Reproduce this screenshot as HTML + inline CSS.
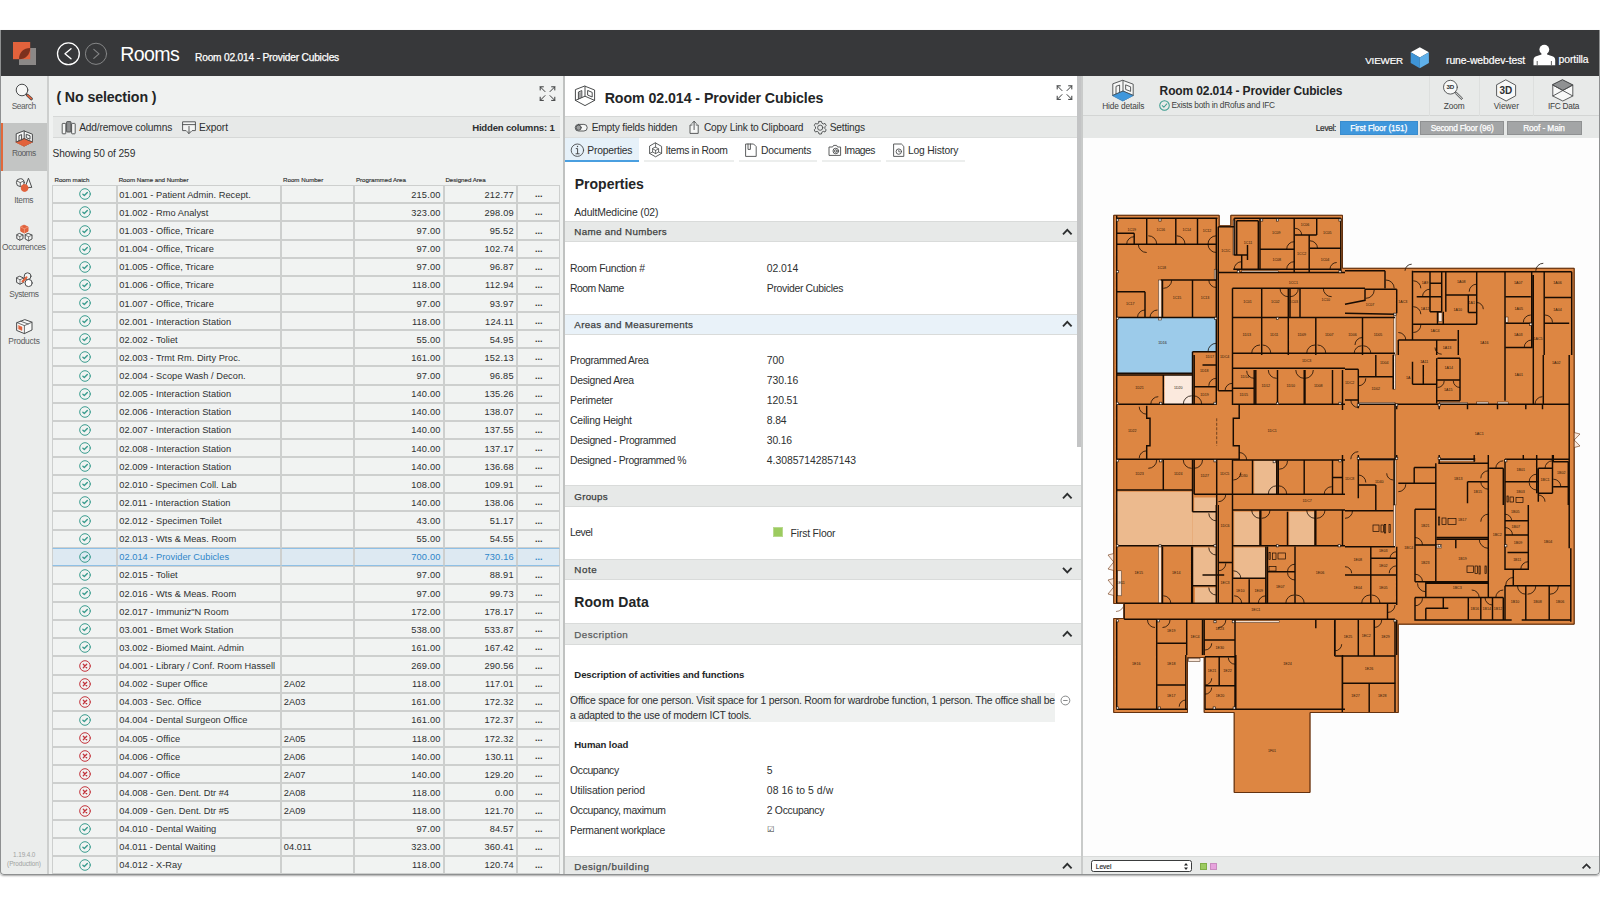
<!DOCTYPE html>
<html lang="en">
<head>
<meta charset="utf-8">
<title>Rooms - Room 02.014 - Provider Cubicles</title>
<style>
*{box-sizing:border-box;margin:0;padding:0}
html,body{width:1600px;height:900px;overflow:hidden;background:#fff}
body{font-family:"Liberation Sans",sans-serif;color:#2d2f30;position:relative;font-size:10px}
.abs{position:absolute}
#app{position:absolute;left:0;top:30px;width:1600px;height:845px;background:#f0f2f1;overflow:hidden;border-radius:0 0 4px 4px;box-shadow:0 1px 2px rgba(0,0,0,.35)}
#hdr{position:absolute;left:0;top:0;width:1600px;height:46px;background:#37383a}
#hdr .t{position:absolute;color:#fff;white-space:nowrap}
#side{position:absolute;left:0;top:46px;width:49px;height:799px;background:#ebedec;border-left:1px solid #b9bbba;border-right:2px solid #cdcfce}
#side .it{position:absolute;left:0;width:46px;text-align:center;font-size:8.6px;color:#5b5d5e;letter-spacing:-.2px}
#side .act{position:absolute;left:0;top:47px;width:46px;height:48px;background:#c3c5c4;border-left:2px solid #e2693b}
#lp{position:absolute;left:49px;top:46px;width:514px;height:799px;background:#f0f2f1}
#div1{position:absolute;left:563px;top:46px;width:2px;height:799px;background:#c0c2c1}
#mp{position:absolute;left:565px;top:46px;width:517px;height:799px;background:#fff;overflow:hidden}
#div2{position:absolute;left:1081px;top:46px;width:1.5px;height:799px;background:#c9cbca}
#rp{position:absolute;left:1082.5px;top:46px;width:517.5px;height:799px;background:#fdfdfd;overflow:hidden}
.t{white-space:nowrap}
#tb{position:absolute;border-collapse:separate;border-spacing:0;table-layout:fixed;width:508px;font-size:9.25px;color:#2d2f30;border:0}
#tb td{height:18.13px;border:1px solid #cdcfce;padding:1.2px 0 0 1.6px;white-space:nowrap;overflow:hidden;line-height:14px;vertical-align:middle;background:#f1f3f2}
#tb td.r{text-align:right;padding:1.2px 2.2px 0 0;letter-spacing:.18px}
#tb td.c{text-align:center;padding:0}
#tb td.c svg{display:block;margin:0 auto;position:relative;top:0px;left:.2px}
#tb td.d{font-weight:700;letter-spacing:0;font-size:9px}
#tb tr.sel td{background:#dde9f2;color:#2f86c9;border-top-color:#8fc0e6;border-bottom-color:#8fc0e6}

</style>
</head>
<body>
<div id="app">
<div id="hdr">
<svg class="abs" style="left:10px;top:9px" width="30" height="30" viewBox="10 9 30 30">
<rect x="19" y="18" width="17" height="17" fill="#8b8887"/>
<rect x="13" y="12" width="17.2" height="17.2" fill="#e2623c"/>
<path d="M19 29.2 C19 22.5 23.5 18 30.2 18 C30.2 24.7 25.7 29.2 19 29.2Z" fill="#7c301d"/>
</svg>
<svg class="abs" style="left:54px;top:9px" width="58" height="30" viewBox="54 9 58 30" fill="none" stroke-linecap="round" stroke-linejoin="round">
<circle cx="68.4" cy="23.8" r="10.9" stroke="#fff" stroke-width="1.3"/>
<path d="M71 18.8 L65 23.8 L71 28.8" stroke="#fff" stroke-width="1.4"/>
<circle cx="96" cy="23.8" r="10.6" stroke="#858687" stroke-width="1"/>
<path d="M93.8 19.3 L99 23.8 L93.8 28.3" stroke="#858687" stroke-width="1.1"/>
</svg>
<span class="abs t" style="left:120.3px;top:15px;font-size:19.6px;line-height:1;color:#fff;letter-spacing:-0.657px;">Rooms</span>
<span class="abs t" style="left:195.0px;top:23px;font-size:10.2px;line-height:1;color:#fff;letter-spacing:-0.195px;-webkit-text-stroke:.25px #fff;">Room 02.014 - Provider Cubicles</span>
<span class="abs t" style="left:1365.2px;top:26px;font-size:9.8px;line-height:1;color:#fff;letter-spacing:-0.143px;-webkit-text-stroke:.2px #fff;">VIEWER</span>
<svg class="abs" style="left:1410px;top:16px" width="20" height="23" viewBox="1410 16 20 23">
<path d="M1419.8 17.3 L1428.9 22.3 L1419.8 27.5 L1410.7 22.3Z" fill="#fff"/>
<path d="M1410.7 22.3 L1419.8 27.5 L1419.8 38.2 L1410.7 33Z" fill="#3e94d6"/>
<path d="M1428.9 22.3 L1419.8 27.5 L1419.8 38.2 L1428.9 33Z" fill="#5fb0ea"/>
</svg>
<span class="abs t" style="left:1446.0px;top:26px;font-size:10.4px;line-height:1;color:#fff;letter-spacing:-0.072px;-webkit-text-stroke:.2px #fff;">rune-webdev-test</span>
<svg class="abs" style="left:1532px;top:13px" width="25" height="24" viewBox="1532 13 25 24">
<circle cx="1544.3" cy="19.6" r="4.9" fill="#fff"/>
<path d="M1533.5 35.2 L1533.5 30 C1533.5 27.5 1535 26.6 1537 26 L1541.5 24.6 L1541.5 23 L1547.1 23 L1547.1 24.6 L1551.6 26 C1553.6 26.6 1555.2 27.5 1555.2 30 L1555.2 35.2Z" fill="#fff"/>
<path d="M1537.2 31 L1537.2 35.2 M1551.4 31 L1551.4 35.2" stroke="#37383a" stroke-width=".8"/>
</svg>
<span class="abs t" style="left:1558.5px;top:25px;font-size:10.4px;line-height:1;color:#fff;letter-spacing:-0.067px;-webkit-text-stroke:.2px #fff;">portilla</span>
</div>
<div id="side">
<div class="act"></div>
<span class="abs t" style="left:10.7px;top:26px;font-size:8.4px;line-height:1;color:#5a5c5d;letter-spacing:-0.419px;">Search</span>
<span class="abs t" style="left:11.0px;top:73px;font-size:8.4px;line-height:1;color:#5a5c5d;letter-spacing:-0.582px;">Rooms</span>
<span class="abs t" style="left:13.2px;top:120px;font-size:8.4px;line-height:1;color:#5a5c5d;letter-spacing:-0.287px;">Items</span>
<span class="abs t" style="left:1.0px;top:167px;font-size:8.4px;line-height:1;color:#5a5c5d;letter-spacing:-0.347px;">Occurrences</span>
<span class="abs t" style="left:8.2px;top:214px;font-size:8.4px;line-height:1;color:#5a5c5d;letter-spacing:-0.387px;">Systems</span>
<span class="abs t" style="left:7.3px;top:261px;font-size:8.4px;line-height:1;color:#5a5c5d;letter-spacing:-0.219px;">Products</span>
<span class="abs t" style="left:12.1px;top:776px;font-size:6.4px;line-height:1;color:#a0a2a1;letter-spacing:-0.116px;">1.19.4.0</span>
<span class="abs t" style="left:6.1px;top:785px;font-size:6.4px;line-height:1;color:#a0a2a1;letter-spacing:-0.088px;">(Production)</span>
<svg class="abs" style="left:-1px;top:0" width="48" height="300" viewBox="0 76 48 300" fill="none" stroke="#4a4c4d" stroke-width="1" stroke-linejoin="round" stroke-linecap="round">
<!-- search -->
<circle cx="22" cy="90" r="5.8" fill="#f6f7f6"/>
<path d="M26.2 94.2 L27.6 95.4" />
<path d="M27.2 95 L31.4 98.8" stroke="#4a4c4d" stroke-width="3"/>
<path d="M27.6 95.4 L31.2 98.6" stroke="#e2623c" stroke-width="1.6"/>
<!-- rooms -->
<path d="M24.2 131 L32.4 134.2 L32.4 142 L24.2 146 L16.2 142 L16.2 134.2Z" fill="#f4f5f4"/>
<path d="M16.2 142 L24.2 138.6 L32.4 142 L24.2 146Z" fill="#e2623c" stroke="#e2623c"/>
<path d="M24.2 131 L24.2 138.6 M16.2 142 L24.2 138.6 L32.4 142"/>
<path d="M19 141 L19 135.6 L21.6 134.6 L21.6 139.8 M26.6 134.4 L30 135.8 L30 139.2 L26.6 137.8Z"/>
<!-- items -->
<circle cx="20.3" cy="182.6" r="3.9" fill="#f4f5f4"/>
<path d="M20.3 182.6 L20.3 186 M17 181 L20.3 182.6 L23.6 181" stroke-width=".8"/>
<path d="M28.6 178.6 L31.8 187.4 L25.4 187.4Z" fill="#f4f5f4"/>
<circle cx="24.6" cy="188" r="3.4" fill="#e2623c" stroke="#e2623c"/>
<!-- occurrences -->
<path d="M24.4 225.3 L28 227 L28 231.2 L24.4 233 L20.8 231.2 L20.8 227Z" fill="#e2623c" stroke="#e2623c"/>
<path d="M20.8 227 L24.4 228.8 L28 227 M24.4 228.8 L24.4 233" stroke="#f4a98c" stroke-width=".7"/>
<path d="M19.8 233.6 L23 235 L23 238.6 L19.8 240.2 L16.8 238.6 L16.8 235Z" fill="#f4f5f4"/>
<path d="M16.8 235 L19.8 236.6 L23 235 M19.8 236.6 L19.8 240.2" stroke-width=".7"/>
<path d="M28.6 233.6 L32 235 L32 239 L28.6 240.8 L25.2 239 L25.2 235Z" fill="#f4f5f4"/>
<path d="M25.2 235 L28.6 236.8 L32 235 M28.6 236.8 L28.6 240.8" stroke-width=".7"/>
<!-- systems -->
<circle cx="27.6" cy="276.2" r="3.4" fill="#f4f5f4"/>
<path d="M20 276.4 L23.6 278 L23.6 282.4 L20 284.2 L16.6 282.4 L16.6 278Z" fill="#f4f5f4"/>
<path d="M16.6 278 L20 279.8 L23.6 278 M20 279.8 L20 284.2" stroke-width=".7"/>
<circle cx="28.6" cy="283" r="3.6" fill="#fff"/>
<path d="M22.6 281.4 L26.4 277.4" stroke="#e2623c" stroke-width="2.2"/>
<!-- products -->
<path d="M17 322.6 L24.8 319.6 L32 322.2 L32 330 L24.4 333.6 L17 330.6Z" fill="#f8f9f8"/>
<path d="M17 322.6 L24.4 325.6 L32 322.2 M24.4 325.6 L24.4 333.6 M20.6 321.2 L28.2 324" stroke-width=".8"/>
<path d="M18.6 325.6 L22 327 L22 330.4 L18.6 329Z" fill="#e2623c" stroke="#e2623c" stroke-width=".5"/>
</svg>
</div>
<div id="lp">
<span class="abs t" style="left:7.4px;top:14px;font-size:14.2px;line-height:1;font-weight:700;color:#232526;letter-spacing:-0.105px;">( No selection )</span>
<svg class="abs" style="left:489px;top:8px" width="20" height="20" viewBox="538 84 20 20" fill="none" stroke="#3a3c3d" stroke-width="1" stroke-linecap="round" stroke-linejoin="round">
<path d="M545 91.6 L540.2 86.8 M540.2 90 L540.2 86.8 L543.4 86.8 M550 91.6 L554.8 86.8 M551.6 86.8 L554.8 86.8 L554.8 90 M545 95.6 L540.2 100.4 M540.2 97.2 L540.2 100.4 L543.4 100.4 M550 95.6 L554.8 100.4 M551.6 100.4 L554.8 100.4 L554.8 97.2"/>
</svg>
<div class="abs" style="left:3.5px;top:40px;width:507.79999999999995px;height:22.4px;background:#e7e9e8;border-top:1px solid #d6d8d7;border-bottom:1px solid #d6d8d7"></div>
<svg class="abs" style="left:11px;top:43px" width="18" height="18" viewBox="60 119 18 18" fill="#f4f5f4" stroke="#4a4c4d" stroke-width=".9" stroke-linejoin="round">
<rect x="62.2" y="123.4" width="3.6" height="10.4" rx=".6"/>
<rect x="71.6" y="123.4" width="3.6" height="10.4" rx=".6"/>
<rect x="66.6" y="121.6" width="4.4" height="10.4" rx=".6" fill="#8d8f90"/>
</svg>
<span class="abs t" style="left:30.2px;top:47px;font-size:10.2px;line-height:1;color:#2d2f30;letter-spacing:-0.151px;">Add/remove columns</span>
<svg class="abs" style="left:131px;top:43px" width="18" height="18" viewBox="180 119 18 18" fill="none" stroke="#4a4c4d" stroke-width=".9" stroke-linejoin="round" stroke-linecap="round">
<path d="M185.6 130.6 L182.6 130.6 L182.6 121.8 L195.4 121.8 L195.4 130.6 L192.4 130.6" fill="#f4f5f4"/>
<path d="M182.6 124.6 L195.4 124.6"/>
<path d="M189 126.4 L189 133.4 M186.6 131.2 L189 133.6 L191.4 131.2"/>
</svg>
<span class="abs t" style="left:150.1px;top:47px;font-size:10.2px;line-height:1;color:#2d2f30;letter-spacing:-0.113px;">Export</span>
<span class="abs t" style="left:423.2px;top:47px;font-size:9.6px;line-height:1;font-weight:700;color:#2d2f30;letter-spacing:-0.204px;">Hidden columns: 1</span>
<span class="abs t" style="left:3.5px;top:73px;font-size:10.2px;line-height:1;color:#2d2f30;letter-spacing:-0.100px;">Showing 50 of 259</span>
<span class="abs t" style="left:5.5px;top:101px;font-size:6.2px;line-height:1;color:#2d2f30;letter-spacing:-0.025px;-webkit-text-stroke:.15px #333;">Room match</span>
<span class="abs t" style="left:69.7px;top:101px;font-size:6.2px;line-height:1;color:#2d2f30;letter-spacing:-0.037px;-webkit-text-stroke:.15px #333;">Room Name and Number</span>
<span class="abs t" style="left:234.0px;top:101px;font-size:6.2px;line-height:1;color:#2d2f30;letter-spacing:0.008px;-webkit-text-stroke:.15px #333;">Room Number</span>
<span class="abs t" style="left:306.9px;top:101px;font-size:6.2px;line-height:1;color:#2d2f30;letter-spacing:-0.008px;-webkit-text-stroke:.15px #333;">Programmed Area</span>
<span class="abs t" style="left:396.4px;top:101px;font-size:6.2px;line-height:1;color:#2d2f30;letter-spacing:-0.021px;-webkit-text-stroke:.15px #333;">Designed Area</span>
<table id="tb" style="left:3.3px;top:109.2px;letter-spacing:0.029px">
<colgroup><col style="width:64.4px"><col style="width:164.5px"><col style="width:73px"><col style="width:89.6px"><col style="width:73.2px"><col style="width:43.3px"></colgroup>
<tr><td class="c"><svg width="12" height="12" viewBox="0 0 12 12" fill="none" stroke="#3a9c8e" stroke-width="1" stroke-linecap="round" stroke-linejoin="round"><circle cx="6" cy="6" r="5.3"/><path d="M3.9 6.2 L5.3 7.5 L8.3 4.6" stroke-width="1.4"/></svg></td><td>01.001 - Patient Admin. Recept.</td><td></td><td class="r">215.00</td><td class="r">212.77</td><td class="c d">...</td></tr>
<tr><td class="c"><svg width="12" height="12" viewBox="0 0 12 12" fill="none" stroke="#3a9c8e" stroke-width="1" stroke-linecap="round" stroke-linejoin="round"><circle cx="6" cy="6" r="5.3"/><path d="M3.9 6.2 L5.3 7.5 L8.3 4.6" stroke-width="1.4"/></svg></td><td>01.002 - Rmo Analyst</td><td></td><td class="r">323.00</td><td class="r">298.09</td><td class="c d">...</td></tr>
<tr><td class="c"><svg width="12" height="12" viewBox="0 0 12 12" fill="none" stroke="#3a9c8e" stroke-width="1" stroke-linecap="round" stroke-linejoin="round"><circle cx="6" cy="6" r="5.3"/><path d="M3.9 6.2 L5.3 7.5 L8.3 4.6" stroke-width="1.4"/></svg></td><td>01.003 - Office, Tricare</td><td></td><td class="r">97.00</td><td class="r">95.52</td><td class="c d">...</td></tr>
<tr><td class="c"><svg width="12" height="12" viewBox="0 0 12 12" fill="none" stroke="#3a9c8e" stroke-width="1" stroke-linecap="round" stroke-linejoin="round"><circle cx="6" cy="6" r="5.3"/><path d="M3.9 6.2 L5.3 7.5 L8.3 4.6" stroke-width="1.4"/></svg></td><td>01.004 - Office, Tricare</td><td></td><td class="r">97.00</td><td class="r">102.74</td><td class="c d">...</td></tr>
<tr><td class="c"><svg width="12" height="12" viewBox="0 0 12 12" fill="none" stroke="#3a9c8e" stroke-width="1" stroke-linecap="round" stroke-linejoin="round"><circle cx="6" cy="6" r="5.3"/><path d="M3.9 6.2 L5.3 7.5 L8.3 4.6" stroke-width="1.4"/></svg></td><td>01.005 - Office, Tricare</td><td></td><td class="r">97.00</td><td class="r">96.87</td><td class="c d">...</td></tr>
<tr><td class="c"><svg width="12" height="12" viewBox="0 0 12 12" fill="none" stroke="#3a9c8e" stroke-width="1" stroke-linecap="round" stroke-linejoin="round"><circle cx="6" cy="6" r="5.3"/><path d="M3.9 6.2 L5.3 7.5 L8.3 4.6" stroke-width="1.4"/></svg></td><td>01.006 - Office, Tricare</td><td></td><td class="r">118.00</td><td class="r">112.94</td><td class="c d">...</td></tr>
<tr><td class="c"><svg width="12" height="12" viewBox="0 0 12 12" fill="none" stroke="#3a9c8e" stroke-width="1" stroke-linecap="round" stroke-linejoin="round"><circle cx="6" cy="6" r="5.3"/><path d="M3.9 6.2 L5.3 7.5 L8.3 4.6" stroke-width="1.4"/></svg></td><td>01.007 - Office, Tricare</td><td></td><td class="r">97.00</td><td class="r">93.97</td><td class="c d">...</td></tr>
<tr><td class="c"><svg width="12" height="12" viewBox="0 0 12 12" fill="none" stroke="#3a9c8e" stroke-width="1" stroke-linecap="round" stroke-linejoin="round"><circle cx="6" cy="6" r="5.3"/><path d="M3.9 6.2 L5.3 7.5 L8.3 4.6" stroke-width="1.4"/></svg></td><td>02.001 - Interaction Station</td><td></td><td class="r">118.00</td><td class="r">124.11</td><td class="c d">...</td></tr>
<tr><td class="c"><svg width="12" height="12" viewBox="0 0 12 12" fill="none" stroke="#3a9c8e" stroke-width="1" stroke-linecap="round" stroke-linejoin="round"><circle cx="6" cy="6" r="5.3"/><path d="M3.9 6.2 L5.3 7.5 L8.3 4.6" stroke-width="1.4"/></svg></td><td>02.002 - Toliet</td><td></td><td class="r">55.00</td><td class="r">54.95</td><td class="c d">...</td></tr>
<tr><td class="c"><svg width="12" height="12" viewBox="0 0 12 12" fill="none" stroke="#3a9c8e" stroke-width="1" stroke-linecap="round" stroke-linejoin="round"><circle cx="6" cy="6" r="5.3"/><path d="M3.9 6.2 L5.3 7.5 L8.3 4.6" stroke-width="1.4"/></svg></td><td>02.003 - Trmt Rm. Dirty Proc.</td><td></td><td class="r">161.00</td><td class="r">152.13</td><td class="c d">...</td></tr>
<tr><td class="c"><svg width="12" height="12" viewBox="0 0 12 12" fill="none" stroke="#3a9c8e" stroke-width="1" stroke-linecap="round" stroke-linejoin="round"><circle cx="6" cy="6" r="5.3"/><path d="M3.9 6.2 L5.3 7.5 L8.3 4.6" stroke-width="1.4"/></svg></td><td>02.004 - Scope Wash / Decon.</td><td></td><td class="r">97.00</td><td class="r">96.85</td><td class="c d">...</td></tr>
<tr><td class="c"><svg width="12" height="12" viewBox="0 0 12 12" fill="none" stroke="#3a9c8e" stroke-width="1" stroke-linecap="round" stroke-linejoin="round"><circle cx="6" cy="6" r="5.3"/><path d="M3.9 6.2 L5.3 7.5 L8.3 4.6" stroke-width="1.4"/></svg></td><td>02.005 - Interaction Station</td><td></td><td class="r">140.00</td><td class="r">135.26</td><td class="c d">...</td></tr>
<tr><td class="c"><svg width="12" height="12" viewBox="0 0 12 12" fill="none" stroke="#3a9c8e" stroke-width="1" stroke-linecap="round" stroke-linejoin="round"><circle cx="6" cy="6" r="5.3"/><path d="M3.9 6.2 L5.3 7.5 L8.3 4.6" stroke-width="1.4"/></svg></td><td>02.006 - Interaction Station</td><td></td><td class="r">140.00</td><td class="r">138.07</td><td class="c d">...</td></tr>
<tr><td class="c"><svg width="12" height="12" viewBox="0 0 12 12" fill="none" stroke="#3a9c8e" stroke-width="1" stroke-linecap="round" stroke-linejoin="round"><circle cx="6" cy="6" r="5.3"/><path d="M3.9 6.2 L5.3 7.5 L8.3 4.6" stroke-width="1.4"/></svg></td><td>02.007 - Interaction Station</td><td></td><td class="r">140.00</td><td class="r">137.55</td><td class="c d">...</td></tr>
<tr><td class="c"><svg width="12" height="12" viewBox="0 0 12 12" fill="none" stroke="#3a9c8e" stroke-width="1" stroke-linecap="round" stroke-linejoin="round"><circle cx="6" cy="6" r="5.3"/><path d="M3.9 6.2 L5.3 7.5 L8.3 4.6" stroke-width="1.4"/></svg></td><td>02.008 - Interaction Station</td><td></td><td class="r">140.00</td><td class="r">137.17</td><td class="c d">...</td></tr>
<tr><td class="c"><svg width="12" height="12" viewBox="0 0 12 12" fill="none" stroke="#3a9c8e" stroke-width="1" stroke-linecap="round" stroke-linejoin="round"><circle cx="6" cy="6" r="5.3"/><path d="M3.9 6.2 L5.3 7.5 L8.3 4.6" stroke-width="1.4"/></svg></td><td>02.009 - Interaction Station</td><td></td><td class="r">140.00</td><td class="r">136.68</td><td class="c d">...</td></tr>
<tr><td class="c"><svg width="12" height="12" viewBox="0 0 12 12" fill="none" stroke="#3a9c8e" stroke-width="1" stroke-linecap="round" stroke-linejoin="round"><circle cx="6" cy="6" r="5.3"/><path d="M3.9 6.2 L5.3 7.5 L8.3 4.6" stroke-width="1.4"/></svg></td><td>02.010 - Specimen Coll. Lab</td><td></td><td class="r">108.00</td><td class="r">109.91</td><td class="c d">...</td></tr>
<tr><td class="c"><svg width="12" height="12" viewBox="0 0 12 12" fill="none" stroke="#3a9c8e" stroke-width="1" stroke-linecap="round" stroke-linejoin="round"><circle cx="6" cy="6" r="5.3"/><path d="M3.9 6.2 L5.3 7.5 L8.3 4.6" stroke-width="1.4"/></svg></td><td>02.011 - Interaction Station</td><td></td><td class="r">140.00</td><td class="r">138.06</td><td class="c d">...</td></tr>
<tr><td class="c"><svg width="12" height="12" viewBox="0 0 12 12" fill="none" stroke="#3a9c8e" stroke-width="1" stroke-linecap="round" stroke-linejoin="round"><circle cx="6" cy="6" r="5.3"/><path d="M3.9 6.2 L5.3 7.5 L8.3 4.6" stroke-width="1.4"/></svg></td><td>02.012 - Specimen Toilet</td><td></td><td class="r">43.00</td><td class="r">51.17</td><td class="c d">...</td></tr>
<tr><td class="c"><svg width="12" height="12" viewBox="0 0 12 12" fill="none" stroke="#3a9c8e" stroke-width="1" stroke-linecap="round" stroke-linejoin="round"><circle cx="6" cy="6" r="5.3"/><path d="M3.9 6.2 L5.3 7.5 L8.3 4.6" stroke-width="1.4"/></svg></td><td>02.013 - Wts &amp; Meas. Room</td><td></td><td class="r">55.00</td><td class="r">54.55</td><td class="c d">...</td></tr>
<tr class="sel"><td class="c"><svg width="12" height="12" viewBox="0 0 12 12" fill="none" stroke="#3a9c8e" stroke-width="1" stroke-linecap="round" stroke-linejoin="round"><circle cx="6" cy="6" r="5.3"/><path d="M3.9 6.2 L5.3 7.5 L8.3 4.6" stroke-width="1.4"/></svg></td><td>02.014 - Provider Cubicles</td><td></td><td class="r">700.00</td><td class="r">730.16</td><td class="c d">...</td></tr>
<tr><td class="c"><svg width="12" height="12" viewBox="0 0 12 12" fill="none" stroke="#3a9c8e" stroke-width="1" stroke-linecap="round" stroke-linejoin="round"><circle cx="6" cy="6" r="5.3"/><path d="M3.9 6.2 L5.3 7.5 L8.3 4.6" stroke-width="1.4"/></svg></td><td>02.015 - Toliet</td><td></td><td class="r">97.00</td><td class="r">88.91</td><td class="c d">...</td></tr>
<tr><td class="c"><svg width="12" height="12" viewBox="0 0 12 12" fill="none" stroke="#3a9c8e" stroke-width="1" stroke-linecap="round" stroke-linejoin="round"><circle cx="6" cy="6" r="5.3"/><path d="M3.9 6.2 L5.3 7.5 L8.3 4.6" stroke-width="1.4"/></svg></td><td>02.016 - Wts &amp; Meas. Room</td><td></td><td class="r">97.00</td><td class="r">99.73</td><td class="c d">...</td></tr>
<tr><td class="c"><svg width="12" height="12" viewBox="0 0 12 12" fill="none" stroke="#3a9c8e" stroke-width="1" stroke-linecap="round" stroke-linejoin="round"><circle cx="6" cy="6" r="5.3"/><path d="M3.9 6.2 L5.3 7.5 L8.3 4.6" stroke-width="1.4"/></svg></td><td>02.017 - Immuniz&quot;N Room</td><td></td><td class="r">172.00</td><td class="r">178.17</td><td class="c d">...</td></tr>
<tr><td class="c"><svg width="12" height="12" viewBox="0 0 12 12" fill="none" stroke="#3a9c8e" stroke-width="1" stroke-linecap="round" stroke-linejoin="round"><circle cx="6" cy="6" r="5.3"/><path d="M3.9 6.2 L5.3 7.5 L8.3 4.6" stroke-width="1.4"/></svg></td><td>03.001 - Bmet Work Station</td><td></td><td class="r">538.00</td><td class="r">533.87</td><td class="c d">...</td></tr>
<tr><td class="c"><svg width="12" height="12" viewBox="0 0 12 12" fill="none" stroke="#3a9c8e" stroke-width="1" stroke-linecap="round" stroke-linejoin="round"><circle cx="6" cy="6" r="5.3"/><path d="M3.9 6.2 L5.3 7.5 L8.3 4.6" stroke-width="1.4"/></svg></td><td>03.002 - Biomed Maint. Admin</td><td></td><td class="r">161.00</td><td class="r">167.42</td><td class="c d">...</td></tr>
<tr><td class="c"><svg width="12" height="12" viewBox="0 0 12 12" fill="none" stroke="#c2343c" stroke-width="1" stroke-linecap="round" stroke-linejoin="round"><circle cx="6" cy="6" r="5.3"/><path d="M4.3 4.3 L7.7 7.7 M7.7 4.3 L4.3 7.7" stroke-width="1.3"/></svg></td><td>04.001 - Library / Conf. Room Hassell</td><td></td><td class="r">269.00</td><td class="r">290.56</td><td class="c d">...</td></tr>
<tr><td class="c"><svg width="12" height="12" viewBox="0 0 12 12" fill="none" stroke="#c2343c" stroke-width="1" stroke-linecap="round" stroke-linejoin="round"><circle cx="6" cy="6" r="5.3"/><path d="M4.3 4.3 L7.7 7.7 M7.7 4.3 L4.3 7.7" stroke-width="1.3"/></svg></td><td>04.002 - Super Office</td><td>2A02</td><td class="r">118.00</td><td class="r">117.01</td><td class="c d">...</td></tr>
<tr><td class="c"><svg width="12" height="12" viewBox="0 0 12 12" fill="none" stroke="#c2343c" stroke-width="1" stroke-linecap="round" stroke-linejoin="round"><circle cx="6" cy="6" r="5.3"/><path d="M4.3 4.3 L7.7 7.7 M7.7 4.3 L4.3 7.7" stroke-width="1.3"/></svg></td><td>04.003 - Sec. Office</td><td>2A03</td><td class="r">161.00</td><td class="r">172.32</td><td class="c d">...</td></tr>
<tr><td class="c"><svg width="12" height="12" viewBox="0 0 12 12" fill="none" stroke="#3a9c8e" stroke-width="1" stroke-linecap="round" stroke-linejoin="round"><circle cx="6" cy="6" r="5.3"/><path d="M3.9 6.2 L5.3 7.5 L8.3 4.6" stroke-width="1.4"/></svg></td><td>04.004 - Dental Surgeon Office</td><td></td><td class="r">161.00</td><td class="r">172.37</td><td class="c d">...</td></tr>
<tr><td class="c"><svg width="12" height="12" viewBox="0 0 12 12" fill="none" stroke="#c2343c" stroke-width="1" stroke-linecap="round" stroke-linejoin="round"><circle cx="6" cy="6" r="5.3"/><path d="M4.3 4.3 L7.7 7.7 M7.7 4.3 L4.3 7.7" stroke-width="1.3"/></svg></td><td>04.005 - Office</td><td>2A05</td><td class="r">118.00</td><td class="r">172.32</td><td class="c d">...</td></tr>
<tr><td class="c"><svg width="12" height="12" viewBox="0 0 12 12" fill="none" stroke="#c2343c" stroke-width="1" stroke-linecap="round" stroke-linejoin="round"><circle cx="6" cy="6" r="5.3"/><path d="M4.3 4.3 L7.7 7.7 M7.7 4.3 L4.3 7.7" stroke-width="1.3"/></svg></td><td>04.006 - Office</td><td>2A06</td><td class="r">140.00</td><td class="r">130.11</td><td class="c d">...</td></tr>
<tr><td class="c"><svg width="12" height="12" viewBox="0 0 12 12" fill="none" stroke="#c2343c" stroke-width="1" stroke-linecap="round" stroke-linejoin="round"><circle cx="6" cy="6" r="5.3"/><path d="M4.3 4.3 L7.7 7.7 M7.7 4.3 L4.3 7.7" stroke-width="1.3"/></svg></td><td>04.007 - Office</td><td>2A07</td><td class="r">140.00</td><td class="r">129.20</td><td class="c d">...</td></tr>
<tr><td class="c"><svg width="12" height="12" viewBox="0 0 12 12" fill="none" stroke="#c2343c" stroke-width="1" stroke-linecap="round" stroke-linejoin="round"><circle cx="6" cy="6" r="5.3"/><path d="M4.3 4.3 L7.7 7.7 M7.7 4.3 L4.3 7.7" stroke-width="1.3"/></svg></td><td>04.008 - Gen. Dent. Dtr #4</td><td>2A08</td><td class="r">118.00</td><td class="r">0.00</td><td class="c d">...</td></tr>
<tr><td class="c"><svg width="12" height="12" viewBox="0 0 12 12" fill="none" stroke="#c2343c" stroke-width="1" stroke-linecap="round" stroke-linejoin="round"><circle cx="6" cy="6" r="5.3"/><path d="M4.3 4.3 L7.7 7.7 M7.7 4.3 L4.3 7.7" stroke-width="1.3"/></svg></td><td>04.009 - Gen. Dent. Dtr #5</td><td>2A09</td><td class="r">118.00</td><td class="r">121.70</td><td class="c d">...</td></tr>
<tr><td class="c"><svg width="12" height="12" viewBox="0 0 12 12" fill="none" stroke="#3a9c8e" stroke-width="1" stroke-linecap="round" stroke-linejoin="round"><circle cx="6" cy="6" r="5.3"/><path d="M3.9 6.2 L5.3 7.5 L8.3 4.6" stroke-width="1.4"/></svg></td><td>04.010 - Dental Waiting</td><td></td><td class="r">97.00</td><td class="r">84.57</td><td class="c d">...</td></tr>
<tr><td class="c"><svg width="12" height="12" viewBox="0 0 12 12" fill="none" stroke="#3a9c8e" stroke-width="1" stroke-linecap="round" stroke-linejoin="round"><circle cx="6" cy="6" r="5.3"/><path d="M3.9 6.2 L5.3 7.5 L8.3 4.6" stroke-width="1.4"/></svg></td><td>04.011 - Dental Waiting</td><td>04.011</td><td class="r">323.00</td><td class="r">360.41</td><td class="c d">...</td></tr>
<tr><td class="c"><svg width="12" height="12" viewBox="0 0 12 12" fill="none" stroke="#3a9c8e" stroke-width="1" stroke-linecap="round" stroke-linejoin="round"><circle cx="6" cy="6" r="5.3"/><path d="M3.9 6.2 L5.3 7.5 L8.3 4.6" stroke-width="1.4"/></svg></td><td>04.012 - X-Ray</td><td></td><td class="r">118.00</td><td class="r">120.74</td><td class="c d">...</td></tr>
</table>
</div>
<div id="div1"></div>
<div id="mp">
<svg class="abs" style="left:8px;top:8px" width="24" height="24" viewBox="573 84 24 24" fill="none" stroke="#4a4c4d" stroke-width="1" stroke-linejoin="round" stroke-linecap="round">
<path d="M585 86.2 L594.6 90 L594.6 100.4 L585 105.6 L575.4 100.4 L575.4 90Z"/>
<path d="M585 86.2 L585 96.2 M575.4 100.4 L585 96.2 L594.6 100.4"/>
<path d="M578.4 99 L578.4 92 L581.8 90.6 L581.8 97.6 M580 98.2 L580 92.6 M588 90.6 L592.2 92.4 L592.2 97 L588 95.2Z"/>
</svg>
<span class="abs t" style="left:39.7px;top:15px;font-size:14.2px;line-height:1;font-weight:700;color:#232526;letter-spacing:-0.067px;">Room 02.014 - Provider Cubicles</span>
<svg class="abs" style="left:490px;top:7px" width="20" height="20" viewBox="538 84 20 20" fill="none" stroke="#3a3c3d" stroke-width="1" stroke-linecap="round" stroke-linejoin="round">
<path d="M545 91.6 L540.2 86.8 M540.2 90 L540.2 86.8 L543.4 86.8 M550 91.6 L554.8 86.8 M551.6 86.8 L554.8 86.8 L554.8 90 M545 95.6 L540.2 100.4 M540.2 97.2 L540.2 100.4 L543.4 100.4 M550 95.6 L554.8 100.4 M551.6 100.4 L554.8 100.4 L554.8 97.2"/>
</svg>
<div class="abs" style="left:0;top:40px;width:516px;height:22.3px;background:#e7e9e8;border-top:1px solid #d6d8d7;border-bottom:1px solid #dcdedd"></div>
<svg class="abs" style="left:8px;top:44px" width="260" height="16" viewBox="573 120 260 16" fill="none" stroke="#4a4c4d" stroke-width=".9" stroke-linejoin="round" stroke-linecap="round">
<rect x="575.2" y="124.4" width="12" height="6.6" rx="3.3" fill="#f6f7f6"/>
<circle cx="578.6" cy="127.7" r="2.6" fill="#9b9d9e"/>
<path d="M692 125 L690 125 L690 133.4 L698.2 133.4 L698.2 125 L696.2 125" fill="#f6f7f6"/>
<path d="M694.1 129.6 L694.1 121.4 M692 123.4 L694.1 121.2 L696.2 123.4"/>
<circle cx="820.2" cy="127.7" r="2.6"/>
<path d="M819 121.4 L821.4 121.4 L821.9 123.2 L823.3 124 L825 123.4 L826.2 125.5 L824.9 126.8 L824.9 128.6 L826.2 129.9 L825 132 L823.3 131.4 L821.9 132.2 L821.4 134 L819 134 L818.5 132.2 L817.1 131.4 L815.4 132 L814.2 129.9 L815.5 128.6 L815.5 126.8 L814.2 125.5 L815.4 123.4 L817.1 124 L818.5 123.2Z"/>
</svg>
<span class="abs t" style="left:26.7px;top:47px;font-size:10.2px;line-height:1;color:#2d2f30;letter-spacing:-0.180px;">Empty fields hidden</span>
<span class="abs t" style="left:138.9px;top:47px;font-size:10.2px;line-height:1;color:#2d2f30;letter-spacing:-0.163px;">Copy Link to Clipboard</span>
<span class="abs t" style="left:264.8px;top:47px;font-size:10.2px;line-height:1;color:#2d2f30;letter-spacing:-0.232px;">Settings</span>
<div class="abs" style="left:0;top:62.4px;width:73.5px;height:23.6px;background:#e6f1f9;border-bottom:2px solid #4a9fe0"></div>
<div class="abs" style="left:78.5px;top:84.4px;width:90.3px;height:1.6px;background:#eceeed"></div>
<div class="abs" style="left:174.2px;top:84.4px;width:78.1px;height:1.6px;background:#eceeed"></div>
<div class="abs" style="left:257.0px;top:84.4px;width:59.3px;height:1.6px;background:#eceeed"></div>
<div class="abs" style="left:320.8px;top:84.4px;width:78.8px;height:1.6px;background:#eceeed"></div>
<svg class="abs" style="left:4px;top:65px" width="340" height="18" viewBox="569 141 340 18" fill="none" stroke="#4a4c4d" stroke-width=".9" stroke-linejoin="round" stroke-linecap="round">
<circle cx="577.4" cy="150.2" r="6.2"/>
<path d="M576.2 148.6 L577.6 148.6 L577.6 153.6 M576 153.8 L579.2 153.8" stroke-width="1"/>
<circle cx="577.5" cy="146.5" r=".7" fill="#4a4c4d" stroke="none"/>
<path d="M655.6 143 L661.6 146.4 L661.6 153.4 L655.6 156.8 L649.6 153.4 L649.6 146.4Z"/>
<path d="M655.6 147.2 L658.6 148.8 L658.6 152 L655.6 153.6 L652.6 152 L652.6 148.8Z M652.6 148.8 L655.6 150.4 L658.6 148.8 M655.6 150.4 L655.6 153.6 M655.6 143 L655.6 147.2 M649.6 153.4 L652.6 152 M661.6 153.4 L658.6 152" stroke-width=".8"/>
<path d="M746 144 L753.6 144 L756.2 146.6 L756.2 156.4 L746 156.4Z" fill="#fff"/>
<path d="M748 144 L748 149.4 L750.4 149.4 L750.4 144"/>
<path d="M829.4 147 L832.6 147 L833.6 145.4 L836.6 145.4 L837.6 147 L840.6 147 L840.6 155.4 L829.4 155.4Z" fill="#fff"/>
<circle cx="835.8" cy="151" r="2.8"/><circle cx="835.8" cy="151" r="1.3"/>
<path d="M894 144 L901.4 144 L903.8 146.4 L903.8 156.4 L894 156.4Z" fill="#fff"/>
<circle cx="898.8" cy="151.6" r="2.7"/><path d="M898.8 150.2 L898.8 151.8 L900 151.8" stroke-width=".8"/>
</svg>
<span class="abs t" style="left:22.3px;top:70px;font-size:10.3px;line-height:1;color:#2d2f30;letter-spacing:-0.205px;">Properties</span>
<span class="abs t" style="left:100.5px;top:70px;font-size:10.3px;line-height:1;color:#2d2f30;letter-spacing:-0.331px;">Items in Room</span>
<span class="abs t" style="left:196.1px;top:70px;font-size:10.3px;line-height:1;color:#2d2f30;letter-spacing:-0.233px;">Documents</span>
<span class="abs t" style="left:279.2px;top:70px;font-size:10.3px;line-height:1;color:#2d2f30;letter-spacing:-0.496px;">Images</span>
<span class="abs t" style="left:342.9px;top:70px;font-size:10.3px;line-height:1;color:#2d2f30;letter-spacing:-0.154px;">Log History</span>
<span class="abs t" style="left:9.8px;top:101px;font-size:14px;line-height:1;font-weight:700;color:#232526;letter-spacing:-0.015px;">Properties</span>
<span class="abs t" style="left:9.3px;top:132px;font-size:10.4px;line-height:1;color:#2d2f30;letter-spacing:-0.151px;">AdultMedicine (02)</span>
<div class="abs" style="left:0;top:145.0px;width:516px;height:21.0px;background:#e7e9e8;border-top:1px solid #d9dbda;border-bottom:1px solid #d9dbda"></div>
<span class="abs t" style="left:9.3px;top:151px;font-size:9.8px;line-height:1;color:#3d3f40;letter-spacing:0.313px;-webkit-text-stroke:.25px #3d3f40;">Name and Numbers</span>
<svg class="abs" style="left:495px;top:149.5px" width="14" height="12" viewBox="1060 225.5 14 12" fill="none" stroke="#2d2f30" stroke-width="1.9" stroke-linejoin="miter"><path d="M1063 233.8 L1067.3 229.4 L1071.6 233.8"/></svg>
<span class="abs t" style="left:5.1px;top:188px;font-size:10.4px;line-height:1;color:#2d2f30;letter-spacing:-0.306px;">Room Function #</span>
<span class="abs t" style="left:201.8px;top:188px;font-size:10.4px;line-height:1;color:#2d2f30;letter-spacing:-0.052px;">02.014</span>
<span class="abs t" style="left:5.1px;top:208px;font-size:10.4px;line-height:1;color:#2d2f30;letter-spacing:-0.531px;">Room Name</span>
<span class="abs t" style="left:201.8px;top:208px;font-size:10.4px;line-height:1;color:#2d2f30;letter-spacing:-0.306px;">Provider Cubicles</span>
<div class="abs" style="left:0;top:237.8px;width:516px;height:21.0px;background:#e9f2f9;border-top:1px solid #d9dbda;border-bottom:1px solid #d9dbda"></div>
<span class="abs t" style="left:9.3px;top:244px;font-size:9.8px;line-height:1;color:#3d3f40;letter-spacing:0.308px;-webkit-text-stroke:.25px #3d3f40;">Areas and Measurements</span>
<svg class="abs" style="left:495px;top:242.3px" width="14" height="12" viewBox="1060 318.3 14 12" fill="none" stroke="#2d2f30" stroke-width="1.9" stroke-linejoin="miter"><path d="M1063 326.6 L1067.3 322.2 L1071.6 326.6"/></svg>
<span class="abs t" style="left:5.1px;top:280px;font-size:10.4px;line-height:1;color:#2d2f30;letter-spacing:-0.400px;">Programmed Area</span>
<span class="abs t" style="left:201.8px;top:280px;font-size:10.4px;line-height:1;color:#2d2f30;letter-spacing:-0.051px;">700</span>
<span class="abs t" style="left:5.1px;top:300px;font-size:10.4px;line-height:1;color:#2d2f30;letter-spacing:-0.348px;">Designed Area</span>
<span class="abs t" style="left:201.8px;top:300px;font-size:10.4px;line-height:1;color:#2d2f30;letter-spacing:-0.052px;">730.16</span>
<span class="abs t" style="left:5.1px;top:320px;font-size:10.4px;line-height:1;color:#2d2f30;letter-spacing:-0.265px;">Perimeter</span>
<span class="abs t" style="left:201.8px;top:320px;font-size:10.4px;line-height:1;color:#2d2f30;letter-spacing:-0.102px;">120.51</span>
<span class="abs t" style="left:5.1px;top:340px;font-size:10.4px;line-height:1;color:#2d2f30;letter-spacing:-0.225px;">Ceiling Height</span>
<span class="abs t" style="left:201.8px;top:340px;font-size:10.4px;line-height:1;color:#2d2f30;letter-spacing:-0.160px;">8.84</span>
<span class="abs t" style="left:5.1px;top:360px;font-size:10.4px;line-height:1;color:#2d2f30;letter-spacing:-0.362px;">Designed - Programmed</span>
<span class="abs t" style="left:201.8px;top:360px;font-size:10.4px;line-height:1;color:#2d2f30;letter-spacing:-0.165px;">30.16</span>
<span class="abs t" style="left:5.1px;top:380px;font-size:10.4px;line-height:1;color:#2d2f30;letter-spacing:-0.401px;">Designed - Programmed %</span>
<span class="abs t" style="left:201.8px;top:380px;font-size:10.4px;line-height:1;color:#2d2f30;letter-spacing:-0.022px;">4.30857142857143</span>
<div class="abs" style="left:0;top:409.3px;width:516px;height:22.0px;background:#e7e9e8;border-top:1px solid #d9dbda;border-bottom:1px solid #d9dbda"></div>
<span class="abs t" style="left:9.3px;top:416px;font-size:9.8px;line-height:1;color:#3d3f40;letter-spacing:0.244px;-webkit-text-stroke:.25px #3d3f40;">Groups</span>
<svg class="abs" style="left:495px;top:414.3px" width="14" height="12" viewBox="1060 490.3 14 12" fill="none" stroke="#2d2f30" stroke-width="1.9" stroke-linejoin="miter"><path d="M1063 498.6 L1067.3 494.2 L1071.6 498.6"/></svg>
<span class="abs t" style="left:5.1px;top:452px;font-size:10.4px;line-height:1;color:#2d2f30;letter-spacing:-0.553px;">Level</span>
<div class="abs" style="left:208.1px;top:451.3px;width:9.8px;height:9.8px;background:#9ccb5f;border:1px solid #b9d98f"></div>
<span class="abs t" style="left:225.6px;top:453px;font-size:10.4px;line-height:1;color:#2d2f30;letter-spacing:-0.182px;">First Floor</span>
<div class="abs" style="left:0;top:482.8px;width:516px;height:21.3px;background:#e7e9e8;border-top:1px solid #d9dbda;border-bottom:1px solid #d9dbda"></div>
<span class="abs t" style="left:9.3px;top:489px;font-size:9.8px;line-height:1;color:#3d3f40;letter-spacing:0.600px;-webkit-text-stroke:.25px #3d3f40;">Note</span>
<svg class="abs" style="left:495px;top:487.5px" width="14" height="12" viewBox="1060 563.5 14 12" fill="none" stroke="#2d2f30" stroke-width="1.9" stroke-linejoin="miter"><path d="M1063 567.4 L1067.3 571.8 L1071.6 567.4"/></svg>
<span class="abs t" style="left:9.3px;top:519px;font-size:14px;line-height:1;font-weight:700;color:#232526;letter-spacing:0.078px;">Room Data</span>
<div class="abs" style="left:0;top:546.8px;width:516px;height:22.0px;background:#e7e9e8;border-top:1px solid #d9dbda;border-bottom:1px solid #d9dbda"></div>
<span class="abs t" style="left:9.3px;top:554px;font-size:9.8px;line-height:1;color:#5a5c5d;letter-spacing:0.444px;-webkit-text-stroke:.25px #5a5c5d;">Description</span>
<svg class="abs" style="left:495px;top:551.8px" width="14" height="12" viewBox="1060 627.8 14 12" fill="none" stroke="#2d2f30" stroke-width="1.9" stroke-linejoin="miter"><path d="M1063 636.1 L1067.3 631.7 L1071.6 636.1"/></svg>
<span class="abs t" style="left:9.3px;top:594px;font-size:9.6px;line-height:1;font-weight:700;color:#232526;letter-spacing:-0.097px;">Description of activities and functions</span>
<div class="abs" style="left:4.8px;top:616.8px;width:485.4px;height:29.7px;background:#eff1f0"></div>
<span class="abs t" style="left:5.1px;top:620px;font-size:10.4px;line-height:1;color:#2d2f30;letter-spacing:-0.240px;">Office space for one person. Visit space for 1 person. Room for wardrobe function, 1 person. The office shall be</span>
<span class="abs t" style="left:5.1px;top:635px;font-size:10.4px;line-height:1;color:#2d2f30;letter-spacing:-0.255px;">a adapted to the use of modern ICT tools.</span>
<svg class="abs" style="left:495px;top:619px" width="12" height="12" viewBox="1060 695 12 12" fill="none" stroke="#6a6c6d" stroke-width=".8"><circle cx="1065.4" cy="700.5" r="4.4"/><path d="M1063.2 700.5 L1067.6 700.5"/></svg>
<span class="abs t" style="left:9.3px;top:664px;font-size:9.6px;line-height:1;font-weight:700;color:#232526;letter-spacing:-0.104px;">Human load</span>
<span class="abs t" style="left:5.1px;top:690px;font-size:10.4px;line-height:1;color:#2d2f30;letter-spacing:-0.370px;">Occupancy</span>
<span class="abs t" style="left:201.8px;top:690px;font-size:10.4px;line-height:1;color:#2d2f30;">5</span>
<span class="abs t" style="left:5.1px;top:710px;font-size:10.4px;line-height:1;color:#2d2f30;letter-spacing:-0.110px;">Utilisation period</span>
<span class="abs t" style="left:201.8px;top:710px;font-size:10.4px;line-height:1;color:#2d2f30;letter-spacing:0.083px;">08 16 to 5 d/w</span>
<span class="abs t" style="left:5.1px;top:730px;font-size:10.4px;line-height:1;color:#2d2f30;letter-spacing:-0.361px;">Occupancy, maximum</span>
<span class="abs t" style="left:201.8px;top:730px;font-size:10.4px;line-height:1;color:#2d2f30;letter-spacing:-0.300px;">2 Occupancy</span>
<span class="abs t" style="left:5.1px;top:750px;font-size:10.4px;line-height:1;color:#2d2f30;letter-spacing:-0.299px;">Permanent workplace</span>
<span class="abs t" style="left:202.2px;top:750.2px;font-size:8px;line-height:1;font-family:'DejaVu Sans',sans-serif;color:#2d2f30">&#9745;</span>
<div class="abs" style="left:0;top:779.5px;width:516px;height:21.5px;background:#e7e9e8;border-top:1px solid #d9dbda;border-bottom:1px solid #d9dbda"></div>
<span class="abs t" style="left:9.3px;top:786px;font-size:9.8px;line-height:1;color:#4a4c4d;letter-spacing:0.552px;-webkit-text-stroke:.25px #4a4c4d;">Design/building</span>
<svg class="abs" style="left:495px;top:784.2px" width="14" height="12" viewBox="1060 860.2 14 12" fill="none" stroke="#2d2f30" stroke-width="1.9" stroke-linejoin="miter"><path d="M1063 868.5 L1067.3 864.1 L1071.6 868.5"/></svg>
<div class="abs" style="left:512.2px;top:0;width:4.6px;height:370.7px;background:#c3c4c5"></div>
</div>
<div id="div2"></div>
<div id="rp">
<div class="abs" style="left:0;top:0;width:518px;height:40.2px;background:#e8eae9;border-bottom:1px solid #d3d5d4"></div>
<div class="abs" style="left:0;top:40.2px;width:518px;height:21.4px;background:#e6e8e7"></div>
<div class="abs" style="left:346.6px;top:0;width:1px;height:40px;background:#dddfde"></div>
<div class="abs" style="left:396.6px;top:0;width:1px;height:40px;background:#dddfde"></div>
<div class="abs" style="left:450.4px;top:0;width:1px;height:40px;background:#dddfde"></div>
<svg class="abs" style="left:25.5px;top:2px" width="30" height="26" viewBox="1108 78 30 26" fill="none" stroke="#4a4c4d" stroke-width=".9" stroke-linejoin="round" stroke-linecap="round">
<path d="M1123 80.4 L1133.2 84.2 L1133.2 95.4 L1123 100.8 L1112.8 95.4 L1112.8 84.2Z" fill="#f6f7f6"/>
<path d="M1112.8 95.4 L1123 91 L1133.2 95.4 L1123 100.8Z" fill="#3f97dc" stroke="#3f97dc"/>
<path d="M1123 80.4 L1123 91 M1112.8 95.4 L1123 91 L1133.2 95.4"/>
<path d="M1116 93.6 L1116 86.4 L1119.6 85 L1119.6 92 M1126 85 L1130.6 86.8 L1130.6 91.4 L1126 89.6Z"/>
</svg>
<span class="abs t" style="left:19.7px;top:26px;font-size:8.3px;line-height:1;color:#3d3f40;letter-spacing:-0.097px;">Hide details</span>
<span class="abs t" style="left:77.1px;top:9px;font-size:12px;line-height:1;font-weight:700;color:#232526;letter-spacing:-0.127px;">Room 02.014 - Provider Cubicles</span>
<svg class="abs" style="left:76.5px;top:23.6px" width="11" height="11" viewBox="0 0 12 12" fill="none" stroke="#3a9c8e" stroke-width="1.1" stroke-linecap="round" stroke-linejoin="round"><circle cx="6" cy="6" r="5.2"/><path d="M3.6 6.2 L5.3 7.9 L8.5 4.3"/></svg>
<span class="abs t" style="left:88.9px;top:25px;font-size:8.3px;line-height:1;color:#3d3f40;letter-spacing:-0.217px;">Exists both in dRofus and IFC</span>
<svg class="abs" style="left:353.5px;top:2px" width="150" height="26" viewBox="1436 78 150 26" fill="none" stroke="#4a4c4d" stroke-width=".9" stroke-linejoin="round" stroke-linecap="round">
<circle cx="1450.4" cy="87.2" r="6.9" fill="#f8f9f8"/>
<path d="M1455.4 92.2 L1456.6 93.4"/>
<path d="M1456.8 92.6 L1462.6 98.2 L1461.4 99.6 L1455.6 93.8Z" fill="#c9cbca"/>
<path d="M1506.1 80 L1515.6 85.2 L1515.6 95.8 L1506.1 101 L1496.6 95.8 L1496.6 85.2Z" fill="#f8f9f8"/>
<path d="M1562.8 80 L1572.8 85 L1572.8 96 L1562.8 101 L1552.8 96 L1552.8 85Z" fill="#f8f9f8"/>
<path d="M1562.8 80 L1572.8 85 L1562.8 90.4 L1552.8 85Z" fill="#8f9192"/>
<path d="M1552.8 85 L1572.8 96 M1572.8 85 L1552.8 96"/>
</svg>
<span class="abs t" style="left:363.9px;top:8.0px;font-size:6.2px;line-height:1;font-weight:700;color:#2d2f30;letter-spacing:-.2px">3D</span>
<span class="abs t" style="left:416.9px;top:9.6px;font-size:10px;line-height:1;font-weight:700;color:#2d2f30;letter-spacing:0px">3D</span>
<span class="abs t" style="left:361.3px;top:26px;font-size:8.3px;line-height:1;color:#3d3f40;letter-spacing:-0.079px;">Zoom</span>
<span class="abs t" style="left:411.2px;top:26px;font-size:8.3px;line-height:1;color:#3d3f40;letter-spacing:0.013px;">Viewer</span>
<span class="abs t" style="left:465.4px;top:26px;font-size:8.3px;line-height:1;color:#3d3f40;letter-spacing:-0.239px;">IFC Data</span>
<span class="abs t" style="left:233.3px;top:48px;font-size:8.3px;line-height:1;color:#2d2f30;letter-spacing:-0.325px;-webkit-text-stroke:.2px #2d2f30;">Level:</span>
<div class="abs" style="left:257.5px;top:44.5px;width:77.8px;height:14.7px;background:#3f97dc;border:1px solid #3a8ccd"></div>
<span class="abs t" style="left:267.7px;top:48px;font-size:8.3px;line-height:1;color:#fff;letter-spacing:-0.120px;-webkit-text-stroke:.25px #fff;">First Floor (151)</span>
<div class="abs" style="left:337.9px;top:44.5px;width:83.6px;height:14.7px;background:#a3a5a6;border:1px solid #8f9192"></div>
<span class="abs t" style="left:348.2px;top:48px;font-size:8.3px;line-height:1;color:#fff;letter-spacing:-0.214px;-webkit-text-stroke:.25px #fff;">Second Floor (96)</span>
<div class="abs" style="left:424.1px;top:44.5px;width:75.1px;height:14.7px;background:#a3a5a6;border:1px solid #8f9192"></div>
<span class="abs t" style="left:440.7px;top:48px;font-size:8.3px;line-height:1;color:#fff;letter-spacing:-0.109px;-webkit-text-stroke:.25px #fff;">Roof - Main</span>
<svg class="abs" style="left:17.5px;top:124px" width="500" height="610" viewBox="1100 200 500 610">
<polygon points="1113.7,215.3 1219.2,215.3 1219.2,225.8 1230.8,225.8 1230.8,215.3 1342.5,215.3 1342.5,268.3 1574.2,268.3 1574.2,624.2 1398.3,624.2 1398.3,712.5 1310.0,712.5 1310.0,792.5 1234.2,792.5 1234.2,712.5 1204.2,712.5 1204.2,657.5 1187.5,657.5 1187.5,712.5 1113.7,712.5 1113.7,618.5 1124.0,618.5 1124.0,603.5 1113.7,603.5" fill="#dd8642" stroke="#8a4a1c" stroke-width="1"/>
<polygon points="1116.7,317.5 1216.3,317.5 1216.3,351.7 1192.5,351.7 1192.5,373.3 1116.7,373.3" fill="#9ccbea"/>
<rect x="1164.5" y="375.0" width="27.7" height="29.2" fill="#fbe9dd"/>
<rect x="1254.2" y="460.8" width="22.5" height="33.3" fill="#ecba8e"/>
<rect x="1116.7" y="491.7" width="75.8" height="13.3" fill="#ecba8e"/>
<rect x="1194.2" y="497.5" width="21.7" height="7.5" fill="#ecba8e"/>
<rect x="1116.7" y="505.0" width="75.8" height="40.0" fill="#ecba8e"/>
<rect x="1192.5" y="511.7" width="23.3" height="33.3" fill="#ecba8e"/>
<rect x="1194.2" y="505.0" width="21.7" height="6.7" fill="#ecba8e"/>
<rect x="1234.2" y="511.7" width="25.0" height="33.3" fill="#ecba8e"/>
<rect x="1289.2" y="511.7" width="25.0" height="33.3" fill="#ecba8e"/>
<rect x="1234.2" y="547.5" width="31.7" height="30.8" fill="#ecba8e"/>
<rect x="1192.5" y="547.5" width="23.3" height="38.3" fill="#ecba8e"/>
<rect x="1195.0" y="587.5" width="20.8" height="15.8" fill="#ecba8e"/>
<rect x="1158.3" y="280.0" width="3.3" height="40.0" fill="#fbe6d6" stroke="#3a1d08" stroke-width=".5"/>
<rect x="1214.2" y="269.2" width="2.8" height="10.8" fill="#fbe6d6" stroke="#3a1d08" stroke-width=".5"/>
<rect x="1233.0" y="220.0" width="2.3" height="35.0" fill="#fbe6d6" stroke="#3a1d08" stroke-width=".5"/>
<rect x="1241.7" y="270.8" width="36.7" height="2.0" fill="#fbe6d6" stroke="#3a1d08" stroke-width=".5"/>
<rect x="1393.8" y="313.3" width="2.2" height="41.7" fill="#fbe6d6" stroke="#3a1d08" stroke-width=".5"/>
<rect x="1438.3" y="312.5" width="3.7" height="9.2" fill="#fbe6d6" stroke="#3a1d08" stroke-width=".5"/>
<rect x="1505.3" y="317.0" width="2.7" height="5.5" fill="#fbe6d6" stroke="#3a1d08" stroke-width=".5"/>
<rect x="1393.0" y="355.0" width="2.7" height="34.2" fill="#fbe6d6" stroke="#3a1d08" stroke-width=".5"/>
<rect x="1358.3" y="402.5" width="36.7" height="2.2" fill="#fbe6d6" stroke="#3a1d08" stroke-width=".5"/>
<rect x="1439.2" y="402.5" width="28.3" height="2.2" fill="#fbe6d6" stroke="#3a1d08" stroke-width=".5"/>
<rect x="1476.7" y="402.0" width="11.7" height="2.7" fill="#fbe6d6" stroke="#3a1d08" stroke-width=".5"/>
<rect x="1497.5" y="402.0" width="10.8" height="2.7" fill="#fbe6d6" stroke="#3a1d08" stroke-width=".5"/>
<rect x="1393.8" y="459.2" width="2.2" height="45.8" fill="#fbe6d6" stroke="#3a1d08" stroke-width=".5"/>
<rect x="1358.3" y="458.7" width="36.7" height="1.7" fill="#fbe6d6" stroke="#3a1d08" stroke-width=".5"/>
<rect x="1439.2" y="458.7" width="35.8" height="2.3" fill="#fbe6d6" stroke="#3a1d08" stroke-width=".5"/>
<rect x="1158.3" y="545.8" width="3.0" height="57.5" fill="#fbe6d6" stroke="#3a1d08" stroke-width=".5"/>
<rect x="1117.5" y="570.8" width="4.2" height="25.0" fill="#fbe6d6" stroke="#3a1d08" stroke-width=".5"/>
<rect x="1235.0" y="620.8" width="44.2" height="1.8" fill="#fbe6d6" stroke="#3a1d08" stroke-width=".5"/>
<rect x="1393.5" y="505.0" width="2.2" height="41.7" fill="#fbe6d6" stroke="#3a1d08" stroke-width=".5"/>
<rect x="1436.3" y="544.7" width="5.3" height="3.3" fill="#fbe6d6" stroke="#3a1d08" stroke-width=".5"/>
<rect x="1188.3" y="658.3" width="11.7" height="3.3" fill="#fbe6d6" stroke="#3a1d08" stroke-width=".5"/>
<path d="M1232.5 353.3H1345.0M1116.7 218.3H1217.5M1234.2 218.3H1340.8M1116.7 244.2H1215.8M1116.7 233.3H1134.2M1134.2 233.3V244.2M1160.8 280.0H1215.8M1116.7 291.7H1145.0M1116.7 317.5H1215.8M1218.3 272.5H1345.0M1232.5 288.3H1345.0M1232.5 317.5H1345.0M1260.0 249.2H1294.2M1295.0 235.0H1316.7M1310.0 248.3H1340.8M1233.3 269.2H1340.8M1236.7 220.8H1258.3M1116.7 215.3V355.0M1146.7 218.3V244.2M1175.8 218.3V244.2M1197.5 218.3V244.2M1216.3 218.3V355.0M1218.3 226.7V355.0M1145.0 291.7V317.5M1162.5 280.0V317.5M1192.5 280.8V317.5M1234.2 218.3V255.0M1236.7 220.8V255.0M1258.3 220.8V269.2M1260.0 218.3V269.2M1294.2 218.3V272.5M1309.2 235.0V272.5M1316.7 218.3V235.0M1340.8 218.3V271.7M1232.5 288.3V355.0M1261.7 288.3V355.0M1288.3 288.3V355.0M1290.0 288.3V317.5M1300.0 288.3V317.5M1315.8 317.5V355.0M1241.7 255.0V269.2M1247.5 245.0V260.0M1234.2 255.0H1247.5M1218.3 226.7H1234.2M1192.5 351.7H1216.3M1192.5 351.7V355.0M1345.0 353.3H1395.0M1345.0 270.8H1385.0M1413.3 271.7H1571.7M1345.0 288.3H1365.0M1365.0 289.2H1396.7M1345.0 317.5H1395.0M1430.0 283.3H1441.7M1416.7 296.7H1441.7M1445.8 295.0H1476.7M1430.0 311.7H1441.7M1413.3 324.2H1476.7M1398.3 340.0H1456.7M1468.3 312.5H1476.7M1505.8 296.7H1530.8M1505.8 323.3H1531.7M1505.8 347.5H1531.7M1545.0 297.5H1571.7M1544.2 323.3H1569.2M1385.0 270.8V288.3M1365.0 289.2V300.8M1396.7 289.2V313.3M1412.5 270.8V340.0M1398.3 340.0V355.0M1430.0 271.7V311.7M1441.7 271.7V311.7M1445.8 271.7V311.7M1437.5 311.7V324.2M1443.3 311.7V324.2M1476.7 271.7V324.2M1468.3 295.8V312.5M1458.3 330.0V355.0M1436.7 340.8V355.0M1362.5 318.3V355.0M1505.0 271.7V355.0M1531.7 271.7V348.3M1533.3 275.0V355.0M1544.2 271.7V355.0M1571.7 271.7V355.0M1345.0 304.2L1365.0 300.3L1365.0 289.2M1345.0 313.3L1395.0 314.2M1116.7 373.3H1192.5M1116.7 375.0H1192.5M1232.5 368.3H1345.0M1116.7 404.2H1216.7M1233.3 404.2H1345.0M1194.2 386.7H1216.7M1233.3 388.3H1254.2M1218.3 390.8H1232.5M1116.7 459.2H1239.2M1233.3 460.0H1345.0M1116.7 490.0H1192.5M1194.2 494.2H1345.0M1332.5 477.5H1342.5M1202.5 365.0H1216.3M1116.7 355.0V505.0M1163.3 375.0V404.2M1192.5 355.0V404.2M1194.2 355.0V404.2M1216.3 355.0V404.2M1218.3 355.0V390.8M1232.5 355.0V405.0M1254.2 370.0V404.2M1255.8 370.0V404.2M1277.5 370.0V404.2M1304.2 370.0V404.2M1305.0 370.0V404.2M1332.5 370.0V404.2M1342.5 370.0V410.0M1146.7 405.8L1146.7 418.3L1150.0 418.3L1150.0 445.8L1146.7 445.8L1146.7 459.2M1239.2 405.0L1239.2 418.3L1233.3 418.3L1233.3 445.8L1239.2 445.8L1239.2 459.2M1163.3 460.0V490.0M1192.5 460.0V505.0M1194.2 460.0V494.2M1216.7 460.0V505.0M1232.5 460.0V505.0M1252.5 460.8V494.2M1276.7 460.8V494.2M1278.3 460.8V494.2M1304.2 460.8V494.2M1332.5 460.8V494.2M1342.5 455.0V494.2M1358.3 404.2H1569.2M1358.3 459.2H1395.0M1439.2 459.2H1475.0M1505.0 459.2H1569.2M1358.3 376.7H1393.3M1345.0 369.2H1358.3M1345.0 400.0H1358.3M1412.5 384.2H1436.7M1437.5 380.0H1460.0M1437.5 358.3H1460.0M1437.5 400.8H1460.0M1438.3 463.3H1488.3M1414.2 467.5H1435.8M1398.3 483.3H1435.8M1467.5 481.7H1488.3M1489.2 468.3H1503.3M1505.0 481.7H1538.3M1538.3 468.3H1552.5M1538.3 493.3H1552.5M1553.3 486.7H1568.3M1553.3 461.7H1568.3M1358.3 485.0H1375.8M1358.3 369.2V408.3M1358.3 455.0V498.3M1375.8 355.0V376.7M1375.8 485.0V505.0M1393.3 355.0V389.2M1395.0 404.2V459.2M1394.2 459.2V505.0M1412.5 361.7V384.2M1423.3 365.0V384.2M1436.7 358.3V403.3M1460.0 358.3V400.8M1505.0 355.0V400.8M1533.3 355.0V404.2M1543.3 355.0V404.2M1569.2 355.0V505.0M1414.2 467.5V483.3M1435.8 463.3V505.0M1467.5 481.7V503.3M1488.3 455.0V505.0M1503.3 468.3V505.0M1505.0 459.2V505.0M1536.7 455.0V493.3M1538.3 468.3V501.7M1552.5 455.0V493.3M1568.3 461.7V505.0M1396.7 404.2V409.2M1439.2 404.2V409.2M1467.5 404.2V409.2M1497.5 404.2V409.2M1525.8 404.2V409.2M1542.5 404.2V409.2M1396.7 455.0V459.2M1439.2 455.0V463.3M1474.2 455.0V461.7M1523.3 455.0V459.2M1553.3 455.0V461.7M1232.5 510.0H1345.0M1116.7 545.8H1215.8M1233.3 545.8H1345.0M1116.7 603.3H1345.0M1124.2 619.2H1345.0M1192.5 511.7H1215.8M1192.5 585.8H1215.8M1218.3 562.5H1232.5M1233.3 578.3H1265.8M1267.5 571.7H1295.0M1202.5 575.0H1224.2M1157.5 643.3H1186.7M1204.2 640.0H1235.0M1116.7 505.0V603.3M1116.7 620.0V655.0M1162.5 546.7V603.3M1191.7 546.7V603.3M1216.3 505.0V603.3M1218.3 505.0V603.3M1232.5 505.0V603.3M1260.0 510.0V545.8M1260.8 510.0V545.8M1287.5 511.7V545.8M1315.0 510.0V545.8M1315.8 510.0V545.8M1342.5 510.0V545.8M1265.8 546.7V603.3M1267.5 546.7V603.3M1295.0 546.7V603.3M1249.2 579.2V603.3M1124.2 603.3V619.2M1156.7 620.0V655.0M1186.7 620.0V655.0M1202.5 620.0V655.0M1204.2 620.0V655.0M1235.0 620.0V655.0M1335.0 620.0V655.0M1315.8 620.0V628.3M1192.5 505.0V511.7M1192.5 546.7V603.3M1345.0 510.8H1393.3M1345.0 546.7H1395.0M1345.0 575.0H1396.7M1370.8 558.3H1396.7M1345.0 603.3H1396.7M1345.0 619.2H1395.0M1415.0 509.2H1435.8M1415.0 545.0H1435.8M1436.7 537.5H1488.3M1436.7 539.2H1488.3M1415.0 581.7H1488.3M1415.0 597.5H1503.3M1425.8 583.3H1488.3M1505.0 520.8H1528.3M1505.0 535.0H1528.3M1507.5 552.5H1528.3M1505.0 569.2H1528.3M1505.0 585.8H1570.8M1415.0 620.0H1511.7M1521.7 620.0H1570.8M1425.8 608.3H1448.3M1375.8 505.0V510.8M1370.8 546.7V603.3M1396.7 546.7V605.0M1387.5 603.3V619.2M1358.3 620.0V655.0M1374.2 620.0V655.0M1396.7 620.0V655.0M1415.0 509.2V581.7M1415.0 597.5V620.8M1435.8 505.0V581.7M1488.3 505.0V597.5M1455.8 539.2V548.3M1425.8 582.5V597.5M1425.8 608.3V620.0M1468.3 597.5V620.8M1480.8 597.5V620.8M1492.5 597.5V620.8M1503.3 597.5V620.0M1505.0 505.0V570.0M1505.0 585.8V620.0M1528.3 505.0V570.0M1513.3 570.0V585.8M1525.8 585.8V619.2M1549.2 585.8V619.2M1569.2 505.0V548.3M1570.8 548.3V621.7M1443.3 598.3V608.3M1342.3 656.0V712.0M1334.7 656.0H1395.8M1334.7 620.3V656.0M1358.3 620.3V656.0M1374.3 620.3V656.0M1342.3 683.3H1395.8M1369.2 683.3V712.0M1395.0 620.3V712.0M1342.5 655.0V709.2M1157.5 685.0H1185.8M1205.0 685.8H1235.0M1116.7 709.2H1187.5M1205.0 709.2H1345.0M1205.0 656.7H1235.0M1116.7 655.0V709.2M1156.7 655.0V709.2M1185.8 655.0V709.2M1205.0 656.7V709.2M1219.2 657.5V685.8M1235.0 655.0V709.2M1235.8 655.0V709.2M1342.5 655.0V709.2" fill="none" stroke="#170b02" stroke-width="1.45"/>
<path d="M1216.7 418.3L1216.7 445.8" fill="none" stroke="#2b1506" stroke-width=".6" stroke-dasharray="3 1.5"/>
<path d="M1138.3 244.2A8.3 8.3 0 0 0 1146.7 252.5M1156.7 244.2A8.3 8.3 0 0 0 1148.3 235.8M1185.0 244.2A8.3 8.3 0 0 0 1176.7 235.8M1208.0 244.2A8.3 8.3 0 0 1 1216.3 235.8M1208.0 244.2A8.3 8.3 0 0 0 1216.3 252.5M1171.7 280.0A8.3 8.3 0 0 1 1163.3 288.3M1208.8 280.0A7.5 7.5 0 0 0 1216.3 287.5M1137.5 317.5A7.5 7.5 0 0 1 1145.0 310.0M1150.0 317.5A7.5 7.5 0 0 1 1157.5 310.0M1286.7 249.2A7.5 7.5 0 0 1 1294.2 241.7M1286.7 269.2A7.5 7.5 0 0 1 1294.2 261.7M1301.7 235.0A6.7 6.7 0 0 0 1295.0 228.3M1317.5 248.3A7.5 7.5 0 0 0 1310.0 240.8M1330.0 269.2A6.7 6.7 0 0 1 1336.7 262.5M1234.2 269.2A7.5 7.5 0 0 1 1241.7 261.7M1280.0 288.3A8.3 8.3 0 0 0 1288.3 296.7M1298.3 288.3A8.3 8.3 0 0 1 1290.0 296.7M1323.3 288.3A8.3 8.3 0 0 0 1331.7 296.7M1251.7 353.3A8.3 8.3 0 0 1 1260.0 345.0M1270.8 353.3A8.3 8.3 0 0 0 1262.5 345.0M1306.7 353.3A8.3 8.3 0 0 1 1315.0 345.0M1325.8 353.3A8.3 8.3 0 0 0 1317.5 345.0M1208.0 351.7A8.3 8.3 0 0 1 1216.3 343.3M1126.7 244.2A7.5 7.5 0 0 1 1134.2 236.7M1394.2 288.3A8.3 8.3 0 0 0 1385.8 280.0M1374.2 290.0A8.3 8.3 0 0 1 1365.8 298.3M1420.8 288.3A7.5 7.5 0 0 0 1413.3 280.8M1422.5 296.7A7.5 7.5 0 0 1 1430.0 289.2M1420.8 314.2A7.5 7.5 0 0 0 1413.3 306.7M1469.2 291.7A7.5 7.5 0 0 1 1476.7 284.2M1483.3 309.2A6.7 6.7 0 0 0 1476.7 302.5M1420.8 325.0A7.5 7.5 0 0 1 1413.3 332.5M1405.8 340.0A7.5 7.5 0 0 0 1398.3 332.5M1523.3 322.5A7.5 7.5 0 0 1 1530.8 315.0M1524.2 347.5A7.5 7.5 0 0 1 1531.7 340.0M1552.5 322.5A7.5 7.5 0 0 0 1545.0 315.0M1355.0 345.0A7.5 7.5 0 0 1 1362.5 337.5M1354.2 353.3A7.5 7.5 0 0 1 1361.7 345.8M1370.8 353.3A7.5 7.5 0 0 0 1363.3 345.8M1405.0 270.8A6.7 6.7 0 0 1 1411.7 264.2M1535.8 270.8A7.5 7.5 0 0 1 1543.3 263.3M1435.0 347.5A6.7 6.7 0 0 0 1441.7 354.2M1150.8 404.2A7.5 7.5 0 0 1 1158.3 396.7M1183.3 404.2A8.3 8.3 0 0 1 1191.7 395.8M1201.7 404.2A8.3 8.3 0 0 0 1193.3 395.8M1139.2 406.7A7.5 7.5 0 0 0 1146.7 414.2M1139.2 458.3A7.5 7.5 0 0 1 1146.7 450.8M1208.8 385.8A7.5 7.5 0 0 1 1216.3 378.3M1225.0 390.8A7.5 7.5 0 0 1 1232.5 383.3M1246.7 370.8A7.5 7.5 0 0 0 1254.2 378.3M1268.3 370.0A8.3 8.3 0 0 0 1276.7 378.3M1295.8 370.0A8.3 8.3 0 0 0 1304.2 378.3M1313.3 370.0A8.3 8.3 0 0 1 1305.0 378.3M1156.7 460.0A8.3 8.3 0 0 1 1148.3 468.3M1183.3 460.0A8.3 8.3 0 0 0 1191.7 468.3M1202.5 460.0A8.3 8.3 0 0 1 1194.2 468.3M1246.7 460.0A7.5 7.5 0 0 0 1239.2 452.5M1240.8 472.5A7.5 7.5 0 0 1 1233.3 480.0M1268.3 494.2A8.3 8.3 0 0 1 1276.7 485.8M1286.7 494.2A8.3 8.3 0 0 0 1278.3 485.8M1287.5 460.8A8.3 8.3 0 0 1 1279.2 469.2M1324.2 494.2A7.5 7.5 0 0 1 1331.7 486.7M1225.8 494.2A7.5 7.5 0 0 1 1218.3 501.7M1365.8 378.3A7.5 7.5 0 0 1 1358.3 385.8M1350.8 400.0A7.5 7.5 0 0 0 1358.3 407.5M1444.2 380.8A6.7 6.7 0 0 1 1437.5 387.5M1453.3 380.8A6.7 6.7 0 0 0 1460.0 387.5M1535.0 404.2A7.5 7.5 0 0 1 1542.5 396.7M1386.7 473.3A6.7 6.7 0 0 0 1393.3 480.0M1365.8 482.5A7.5 7.5 0 0 0 1358.3 475.0M1405.8 484.2A7.5 7.5 0 0 1 1398.3 491.7M1480.8 478.3A7.5 7.5 0 0 1 1488.3 470.8M1480.8 481.7A7.5 7.5 0 0 0 1488.3 489.2M1495.8 468.3A7.5 7.5 0 0 1 1503.3 460.8M1529.2 481.7A7.5 7.5 0 0 1 1536.7 474.2M1529.2 482.5A7.5 7.5 0 0 0 1536.7 490.0M1545.0 468.3A7.5 7.5 0 0 1 1552.5 460.8M1560.8 486.7A7.5 7.5 0 0 0 1553.3 479.2M1545.0 501.7A6.7 6.7 0 0 0 1538.3 495.0M1350.8 459.2A7.5 7.5 0 0 1 1358.3 451.7M1251.7 510.0A8.3 8.3 0 0 0 1260.0 518.3M1270.0 510.0A8.3 8.3 0 0 1 1261.7 518.3M1306.7 510.0A8.3 8.3 0 0 0 1315.0 518.3M1325.0 510.0A8.3 8.3 0 0 1 1316.7 518.3M1208.8 513.3A7.5 7.5 0 0 0 1216.3 520.8M1208.8 547.5A7.5 7.5 0 0 0 1216.3 555.0M1225.8 563.3A7.5 7.5 0 0 1 1218.3 570.8M1240.8 578.3A7.5 7.5 0 0 0 1233.3 570.8M1287.5 571.7A7.5 7.5 0 0 1 1295.0 564.2M1287.5 572.5A7.5 7.5 0 0 0 1295.0 580.0M1208.8 587.5A7.5 7.5 0 0 0 1216.3 595.0M1170.8 603.3A7.5 7.5 0 0 0 1163.3 595.8M1241.7 603.3A7.5 7.5 0 0 0 1234.2 595.8M1258.3 603.3A7.5 7.5 0 0 1 1265.8 595.8M1285.8 603.3A8.3 8.3 0 0 1 1294.2 595.0M1304.2 603.3A8.3 8.3 0 0 0 1295.8 595.0M1147.5 620.0A7.5 7.5 0 0 0 1155.0 627.5M1170.0 620.0A7.5 7.5 0 0 1 1162.5 627.5M1225.8 620.0A7.5 7.5 0 0 1 1218.3 627.5M1341.7 644.2A6.7 6.7 0 0 1 1335.0 650.8M1211.7 643.3A6.7 6.7 0 0 1 1205.0 650.0M1352.5 510.8A7.5 7.5 0 0 1 1345.0 518.3M1480.8 521.7A7.5 7.5 0 0 1 1488.3 514.2M1422.5 545.0A7.5 7.5 0 0 0 1415.0 537.5M1479.2 539.2A9.2 9.2 0 0 0 1488.3 548.3M1422.5 581.7A7.5 7.5 0 0 0 1415.0 574.2M1417.5 583.3A8.3 8.3 0 0 0 1425.8 591.7M1390.0 558.3A6.7 6.7 0 0 1 1396.7 551.7M1389.2 573.3A7.5 7.5 0 0 1 1396.7 565.8M1351.7 573.3A6.7 6.7 0 0 0 1345.0 566.7M1361.7 603.3A8.3 8.3 0 0 1 1370.0 595.0M1380.0 603.3A8.3 8.3 0 0 0 1371.7 595.0M1395.0 605.0A7.5 7.5 0 0 1 1387.5 612.5M1422.5 598.3A7.5 7.5 0 0 1 1415.0 605.8M1479.2 597.5A7.5 7.5 0 0 0 1471.7 590.0M1485.0 597.5A7.5 7.5 0 0 0 1492.5 605.0M1495.8 597.5A7.5 7.5 0 0 1 1503.3 590.0M1511.7 520.8A6.7 6.7 0 0 0 1505.0 514.2M1512.5 535.0A7.5 7.5 0 0 0 1505.0 527.5M1520.8 569.2A7.5 7.5 0 0 1 1528.3 561.7M1505.8 585.0A7.5 7.5 0 0 1 1513.3 577.5M1517.5 585.8A8.3 8.3 0 0 0 1525.8 594.2M1535.8 585.8A8.3 8.3 0 0 1 1527.5 594.2M1558.3 585.8A8.3 8.3 0 0 1 1550.0 594.2M1381.7 620.0A7.5 7.5 0 0 1 1374.2 627.5M1228.3 657.5A6.7 6.7 0 0 0 1235.0 664.2M1211.7 678.3A6.7 6.7 0 0 1 1205.0 685.0M1211.7 687.5A6.7 6.7 0 0 1 1205.0 694.2M1179.2 706.7A6.7 6.7 0 0 1 1185.8 700.0" fill="none" stroke="#170b02" stroke-width=".8"/>
<rect x="1116.4" y="218.9" width="2.2" height="2.2" fill="#fdf3ea" stroke="#170b02" stroke-width=".6"/>
<rect x="1158.9" y="218.9" width="2.2" height="2.2" fill="#fdf3ea" stroke="#170b02" stroke-width=".6"/>
<rect x="1260.6" y="218.9" width="2.2" height="2.2" fill="#fdf3ea" stroke="#170b02" stroke-width=".6"/>
<rect x="1276.4" y="218.9" width="2.2" height="2.2" fill="#fdf3ea" stroke="#170b02" stroke-width=".6"/>
<rect x="1338.9" y="218.9" width="2.2" height="2.2" fill="#fdf3ea" stroke="#170b02" stroke-width=".6"/>
<rect x="1116.4" y="270.6" width="2.2" height="2.2" fill="#fdf3ea" stroke="#170b02" stroke-width=".6"/>
<rect x="1338.9" y="270.6" width="2.2" height="2.2" fill="#fdf3ea" stroke="#170b02" stroke-width=".6"/>
<rect x="1214.7" y="317.2" width="2.2" height="2.2" fill="#fdf3ea" stroke="#170b02" stroke-width=".6"/>
<rect x="1116.4" y="317.2" width="2.2" height="2.2" fill="#fdf3ea" stroke="#170b02" stroke-width=".6"/>
<rect x="1276.4" y="317.2" width="2.2" height="2.2" fill="#fdf3ea" stroke="#170b02" stroke-width=".6"/>
<rect x="1237.2" y="270.6" width="2.2" height="2.2" fill="#fdf3ea" stroke="#170b02" stroke-width=".6"/>
<rect x="1393.9" y="313.1" width="2.2" height="2.2" fill="#fdf3ea" stroke="#170b02" stroke-width=".6"/>
<rect x="1529.7" y="323.1" width="2.2" height="2.2" fill="#fdf3ea" stroke="#170b02" stroke-width=".6"/>
<rect x="1116.4" y="402.2" width="2.2" height="2.2" fill="#fdf3ea" stroke="#170b02" stroke-width=".6"/>
<rect x="1159.7" y="402.2" width="2.2" height="2.2" fill="#fdf3ea" stroke="#170b02" stroke-width=".6"/>
<rect x="1213.9" y="402.2" width="2.2" height="2.2" fill="#fdf3ea" stroke="#170b02" stroke-width=".6"/>
<rect x="1276.4" y="402.2" width="2.2" height="2.2" fill="#fdf3ea" stroke="#170b02" stroke-width=".6"/>
<rect x="1338.9" y="402.2" width="2.2" height="2.2" fill="#fdf3ea" stroke="#170b02" stroke-width=".6"/>
<rect x="1116.4" y="459.7" width="2.2" height="2.2" fill="#fdf3ea" stroke="#170b02" stroke-width=".6"/>
<rect x="1159.7" y="459.7" width="2.2" height="2.2" fill="#fdf3ea" stroke="#170b02" stroke-width=".6"/>
<rect x="1213.9" y="459.7" width="2.2" height="2.2" fill="#fdf3ea" stroke="#170b02" stroke-width=".6"/>
<rect x="1273.1" y="460.6" width="2.2" height="2.2" fill="#fdf3ea" stroke="#170b02" stroke-width=".6"/>
<rect x="1338.9" y="459.7" width="2.2" height="2.2" fill="#fdf3ea" stroke="#170b02" stroke-width=".6"/>
<rect x="1357.2" y="403.9" width="2.2" height="2.2" fill="#fdf3ea" stroke="#170b02" stroke-width=".6"/>
<rect x="1395.6" y="403.9" width="2.2" height="2.2" fill="#fdf3ea" stroke="#170b02" stroke-width=".6"/>
<rect x="1438.1" y="403.9" width="2.2" height="2.2" fill="#fdf3ea" stroke="#170b02" stroke-width=".6"/>
<rect x="1357.2" y="457.2" width="2.2" height="2.2" fill="#fdf3ea" stroke="#170b02" stroke-width=".6"/>
<rect x="1395.6" y="457.2" width="2.2" height="2.2" fill="#fdf3ea" stroke="#170b02" stroke-width=".6"/>
<rect x="1438.1" y="457.2" width="2.2" height="2.2" fill="#fdf3ea" stroke="#170b02" stroke-width=".6"/>
<rect x="1504.7" y="459.7" width="2.2" height="2.2" fill="#fdf3ea" stroke="#170b02" stroke-width=".6"/>
<rect x="1116.4" y="544.7" width="2.2" height="2.2" fill="#fdf3ea" stroke="#170b02" stroke-width=".6"/>
<rect x="1158.9" y="544.7" width="2.2" height="2.2" fill="#fdf3ea" stroke="#170b02" stroke-width=".6"/>
<rect x="1213.9" y="544.7" width="2.2" height="2.2" fill="#fdf3ea" stroke="#170b02" stroke-width=".6"/>
<rect x="1276.4" y="544.7" width="2.2" height="2.2" fill="#fdf3ea" stroke="#170b02" stroke-width=".6"/>
<rect x="1338.1" y="544.7" width="2.2" height="2.2" fill="#fdf3ea" stroke="#170b02" stroke-width=".6"/>
<rect x="1116.4" y="619.7" width="2.2" height="2.2" fill="#fdf3ea" stroke="#170b02" stroke-width=".6"/>
<rect x="1157.2" y="619.7" width="2.2" height="2.2" fill="#fdf3ea" stroke="#170b02" stroke-width=".6"/>
<rect x="1213.9" y="620.6" width="2.2" height="2.2" fill="#fdf3ea" stroke="#170b02" stroke-width=".6"/>
<rect x="1232.2" y="620.6" width="2.2" height="2.2" fill="#fdf3ea" stroke="#170b02" stroke-width=".6"/>
<rect x="1393.9" y="619.7" width="2.2" height="2.2" fill="#fdf3ea" stroke="#170b02" stroke-width=".6"/>
<rect x="1438.1" y="544.7" width="2.2" height="2.2" fill="#fdf3ea" stroke="#170b02" stroke-width=".6"/>
<rect x="1504.7" y="544.7" width="2.2" height="2.2" fill="#fdf3ea" stroke="#170b02" stroke-width=".6"/>
<rect x="1116.4" y="706.9" width="2.2" height="2.2" fill="#fdf3ea" stroke="#170b02" stroke-width=".6"/>
<rect x="1158.1" y="706.9" width="2.2" height="2.2" fill="#fdf3ea" stroke="#170b02" stroke-width=".6"/>
<rect x="1213.1" y="706.9" width="2.2" height="2.2" fill="#fdf3ea" stroke="#170b02" stroke-width=".6"/>
<rect x="1233.1" y="706.9" width="2.2" height="2.2" fill="#fdf3ea" stroke="#170b02" stroke-width=".6"/>
<path d="M1113.7 553.5L1108 555L1113.7 562L1108 569L1113.7 570.5M1113.7 578.5L1108 580L1113.7 587L1108 594L1113.7 595.5" fill="#fbe9dd" stroke="#6b3410" stroke-width=".6"/>
<path d="M1574.2 432.5L1580 434L1574.2 440L1580 446L1574.2 447.5" fill="#fbe9dd" stroke="#6b3410" stroke-width=".6"/>
<path d="M1124 603.5A8 8 0 0 1 1116 611.5" fill="none" stroke="#6b3410" stroke-width=".6"/>
<rect x="1438.5" y="517" width="1.2" height="8" fill="none" stroke="#170b02" stroke-width=".7"/>
<rect x="1442" y="518" width="4" height="6.5" fill="none" stroke="#170b02" stroke-width=".7"/>
<rect x="1448" y="518.5" width="8" height="6" fill="none" stroke="#170b02" stroke-width=".7"/>
<rect x="1373" y="525" width="6" height="6.5" fill="none" stroke="#170b02" stroke-width=".7"/>
<rect x="1381" y="525" width="2.5" height="7" fill="none" stroke="#170b02" stroke-width=".7"/>
<rect x="1384.5" y="524.5" width="1.2" height="8.5" fill="none" stroke="#170b02" stroke-width=".7"/>
<rect x="1389" y="524.5" width="1.2" height="8" fill="none" stroke="#170b02" stroke-width=".7"/>
<rect x="1467" y="566" width="6.5" height="6.5" fill="none" stroke="#170b02" stroke-width=".7"/>
<rect x="1475" y="566" width="2.5" height="7.5" fill="none" stroke="#170b02" stroke-width=".7"/>
<rect x="1479" y="566" width="1.2" height="8" fill="none" stroke="#170b02" stroke-width=".7"/>
<rect x="1485" y="566" width="1.2" height="7.5" fill="none" stroke="#170b02" stroke-width=".7"/>
<rect x="1269" y="552.5" width="1.2" height="7" fill="none" stroke="#170b02" stroke-width=".7"/>
<rect x="1272.5" y="553" width="3.5" height="6.5" fill="none" stroke="#170b02" stroke-width=".7"/>
<rect x="1278" y="553" width="7.5" height="6" fill="none" stroke="#170b02" stroke-width=".7"/>
<rect x="1269" y="566.5" width="7" height="4.5" fill="none" stroke="#170b02" stroke-width=".7"/>
<rect x="1507" y="496" width="1.2" height="6" fill="none" stroke="#170b02" stroke-width=".7"/>
<rect x="1510" y="497" width="3.5" height="5" fill="none" stroke="#170b02" stroke-width=".7"/>
<rect x="1516" y="497.5" width="7" height="5" fill="none" stroke="#170b02" stroke-width=".7"/>
<polygon points="1113.7,215.3 1219.2,215.3 1219.2,225.8 1230.8,225.8 1230.8,215.3 1342.5,215.3 1342.5,268.3 1574.2,268.3 1574.2,624.2 1398.3,624.2 1398.3,712.5 1310.0,712.5 1310.0,792.5 1234.2,792.5 1234.2,712.5 1204.2,712.5 1204.2,657.5 1187.5,657.5 1187.5,712.5 1113.7,712.5 1113.7,618.5 1124.0,618.5 1124.0,603.5 1113.7,603.5" fill="none" stroke="#5a2c0c" stroke-width=".8"/>
<g style="font-family:'Liberation Sans',sans-serif" font-size="3.6" fill="#2b1506" text-anchor="middle">
<text x="1131.7" y="231.1">1C19</text>
<text x="1160.8" y="231.1">1C16</text>
<text x="1186.7" y="231.1">1C14</text>
<text x="1207.0" y="232.4">1C12</text>
<text x="1161.7" y="268.6">1C18</text>
<text x="1130.3" y="304.9">1C17</text>
<text x="1177.0" y="298.9">1C15</text>
<text x="1205.0" y="298.9">1C13</text>
<text x="1248.0" y="244.1">1C11</text>
<text x="1276.3" y="234.1">1C09</text>
<text x="1305.0" y="226.4">1C06</text>
<text x="1327.2" y="234.1">1C05</text>
<text x="1276.7" y="260.8">1C08</text>
<text x="1301.7" y="254.8">1CC2</text>
<text x="1325.0" y="260.8">1C04</text>
<text x="1293.3" y="283.9">1CC1</text>
<text x="1247.5" y="303.1">1C01</text>
<text x="1275.3" y="303.1">1C02</text>
<text x="1293.8" y="303.1">1C03</text>
<text x="1325.8" y="301.4">1C10</text>
<text x="1246.7" y="335.8">1D13</text>
<text x="1274.2" y="335.8">1D11</text>
<text x="1301.7" y="335.8">1D09</text>
<text x="1329.2" y="335.8">1D07</text>
<text x="1162.5" y="344.4">1D16</text>
<text x="1225.8" y="251.9">1C1C</text>
<text x="1370.0" y="305.6">1C07</text>
<text x="1402.8" y="303.3">1AC3</text>
<text x="1461.2" y="282.8">1A08</text>
<text x="1457.8" y="311.1">1A10</text>
<text x="1471.7" y="304.4">1A1</text>
<text x="1435.0" y="332.4">1AC4</text>
<text x="1447.0" y="348.8">1A13</text>
<text x="1484.2" y="343.6">1A16</text>
<text x="1518.3" y="284.4">1A07</text>
<text x="1518.7" y="310.3">1A05</text>
<text x="1518.3" y="335.8">1A03</text>
<text x="1538.0" y="339.8">1AC5</text>
<text x="1557.5" y="284.4">1A06</text>
<text x="1557.5" y="311.4">1A04</text>
<text x="1352.5" y="335.6">1D06</text>
<text x="1378.0" y="335.6">1D05</text>
<text x="1425.0" y="284.1">1A9</text>
<text x="1425.0" y="310.4">1A12</text>
<text x="1139.5" y="389.4">1D21</text>
<text x="1178.3" y="389.4">1D20</text>
<text x="1204.2" y="372.4">1D18</text>
<text x="1204.5" y="395.6">1D19</text>
<text x="1244.7" y="378.3">1D14</text>
<text x="1243.7" y="396.1">1D15</text>
<text x="1265.8" y="387.1">1D12</text>
<text x="1290.8" y="387.1">1D10</text>
<text x="1318.3" y="387.1">1D08</text>
<text x="1306.7" y="362.4">1DC3</text>
<text x="1132.2" y="432.3">1D22</text>
<text x="1272.2" y="431.9">1DC1</text>
<text x="1139.5" y="475.3">1D23</text>
<text x="1178.3" y="474.9">1D24</text>
<text x="1204.7" y="476.9">1D27</text>
<text x="1224.7" y="474.8">1DC5</text>
<text x="1243.3" y="477.4">1D30</text>
<text x="1307.2" y="502.3">1DC7</text>
<text x="1209.7" y="357.8">1D17</text>
<text x="1224.7" y="357.8">1DC4</text>
<text x="1384.2" y="364.1">1D04</text>
<text x="1375.8" y="389.8">1D02</text>
<text x="1349.7" y="384.1">1DC2</text>
<text x="1424.2" y="362.8">1A11</text>
<text x="1448.7" y="368.6">1A14</text>
<text x="1448.3" y="391.1">1A15</text>
<text x="1518.8" y="376.4">1A01</text>
<text x="1556.3" y="364.1">1A02</text>
<text x="1479.2" y="435.3">1AC1</text>
<text x="1520.8" y="470.8">1B01</text>
<text x="1458.3" y="480.3">1B13</text>
<text x="1477.8" y="492.8">1B15</text>
<text x="1520.5" y="492.8">1B03</text>
<text x="1545.0" y="481.4">1BC1</text>
<text x="1561.2" y="474.4">1B02</text>
<text x="1349.7" y="480.3">1DC8</text>
<text x="1379.2" y="482.8">1D40</text>
<text x="1408.3" y="379.4">1A</text>
<text x="1225.0" y="526.6">1DC6</text>
<text x="1138.7" y="574.4">1E15</text>
<text x="1176.3" y="574.4">1E14</text>
<text x="1225.0" y="583.6">1EC3</text>
<text x="1240.3" y="591.6">1E10</text>
<text x="1258.7" y="591.6">1E09</text>
<text x="1280.3" y="587.8">1E07</text>
<text x="1320.0" y="574.4">1E06</text>
<text x="1255.8" y="611.4">1EC1</text>
<text x="1171.3" y="632.4">1E19</text>
<text x="1195.0" y="638.1">1EC4</text>
<text x="1219.7" y="630.3">1E23</text>
<text x="1219.7" y="649.1">1E30</text>
<text x="1120.8" y="583.6">1E11</text>
<text x="1462.2" y="520.6">1B17</text>
<text x="1425.3" y="527.4">1B21</text>
<text x="1425.3" y="563.6">1B23</text>
<text x="1462.5" y="559.9">1B19</text>
<text x="1408.8" y="548.6">1BC4</text>
<text x="1457.2" y="589.4">1BC3</text>
<text x="1497.2" y="535.8">1BC2</text>
<text x="1515.3" y="512.8">1B05</text>
<text x="1515.8" y="527.8">1B07</text>
<text x="1518.0" y="544.1">1B09</text>
<text x="1517.2" y="561.1">1B11</text>
<text x="1548.0" y="542.8">1B04</text>
<text x="1515.0" y="602.8">1B10</text>
<text x="1537.5" y="602.8">1B08</text>
<text x="1560.0" y="602.8">1B06</text>
<text x="1474.7" y="610.3">1B16</text>
<text x="1486.7" y="610.3">1B14</text>
<text x="1498.0" y="610.3">1B12</text>
<text x="1383.3" y="552.4">1E03</text>
<text x="1383.3" y="566.6">1E02</text>
<text x="1383.3" y="588.9">1E05</text>
<text x="1357.8" y="588.9">1E04</text>
<text x="1357.8" y="560.6">1E08</text>
<text x="1348.0" y="638.3">1E25</text>
<text x="1366.2" y="637.3">1EC2</text>
<text x="1385.5" y="638.3">1E29</text>
<text x="1136.3" y="664.8">1E16</text>
<text x="1171.3" y="665.3">1E18</text>
<text x="1171.3" y="697.3">1E17</text>
<text x="1212.0" y="672.3">1E21</text>
<text x="1227.5" y="672.3">1E22</text>
<text x="1220.0" y="697.3">1E20</text>
<text x="1287.5" y="664.8">1E24</text>
<text x="1272.0" y="751.9">1F01</text>
<text x="1369.0" y="670.3">1E26</text>
<text x="1355.5" y="696.9">1E27</text>
<text x="1382.3" y="696.9">1E28</text>
</g>
</svg>
<div class="abs" style="left:0;top:779.5px;width:518px;height:21px;background:#e8eae9;border-top:1px solid #d9dbda"></div>
<div class="abs" style="left:8.0px;top:784.4px;width:101px;height:11.4px;background:#fff;border:1px solid #3a3c3d;border-radius:2.5px"></div>
<span class="abs t" style="left:13.3px;top:788px;font-size:6.4px;line-height:1;color:#232526;letter-spacing:0.060px;-webkit-text-stroke:.15px #232526;">Level</span>
<svg class="abs" style="left:100.5px;top:785.5px" width="6" height="9" viewBox="0 0 6 9" fill="#232526"><path d="M1 3.6 L3 1 L5 3.6Z M1 5.4 L3 8 L5 5.4Z"/></svg>
<div class="abs" style="left:117.3px;top:786.8px;width:7.3px;height:7px;background:#9ccb5f;border:.5px solid #7fae45"></div>
<div class="abs" style="left:127.6px;top:786.8px;width:7.3px;height:7px;background:#e7a3dd;border:.5px solid #c98cc0"></div>
<svg class="abs" style="left:497.5px;top:784.0px" width="14" height="12" viewBox="1580 860 14 12" fill="none" stroke="#2d2f30" stroke-width="1.7"><path d="M1582.6 868.4 L1586.5 864.4 L1590.4 868.4"/></svg>
</div>
<div class="abs" style="left:0;top:0;width:1600px;height:845px;border:1px solid #8e9091;border-top:0;border-radius:0 0 4px 4px;pointer-events:none"></div>
</div>
</body>
</html>
